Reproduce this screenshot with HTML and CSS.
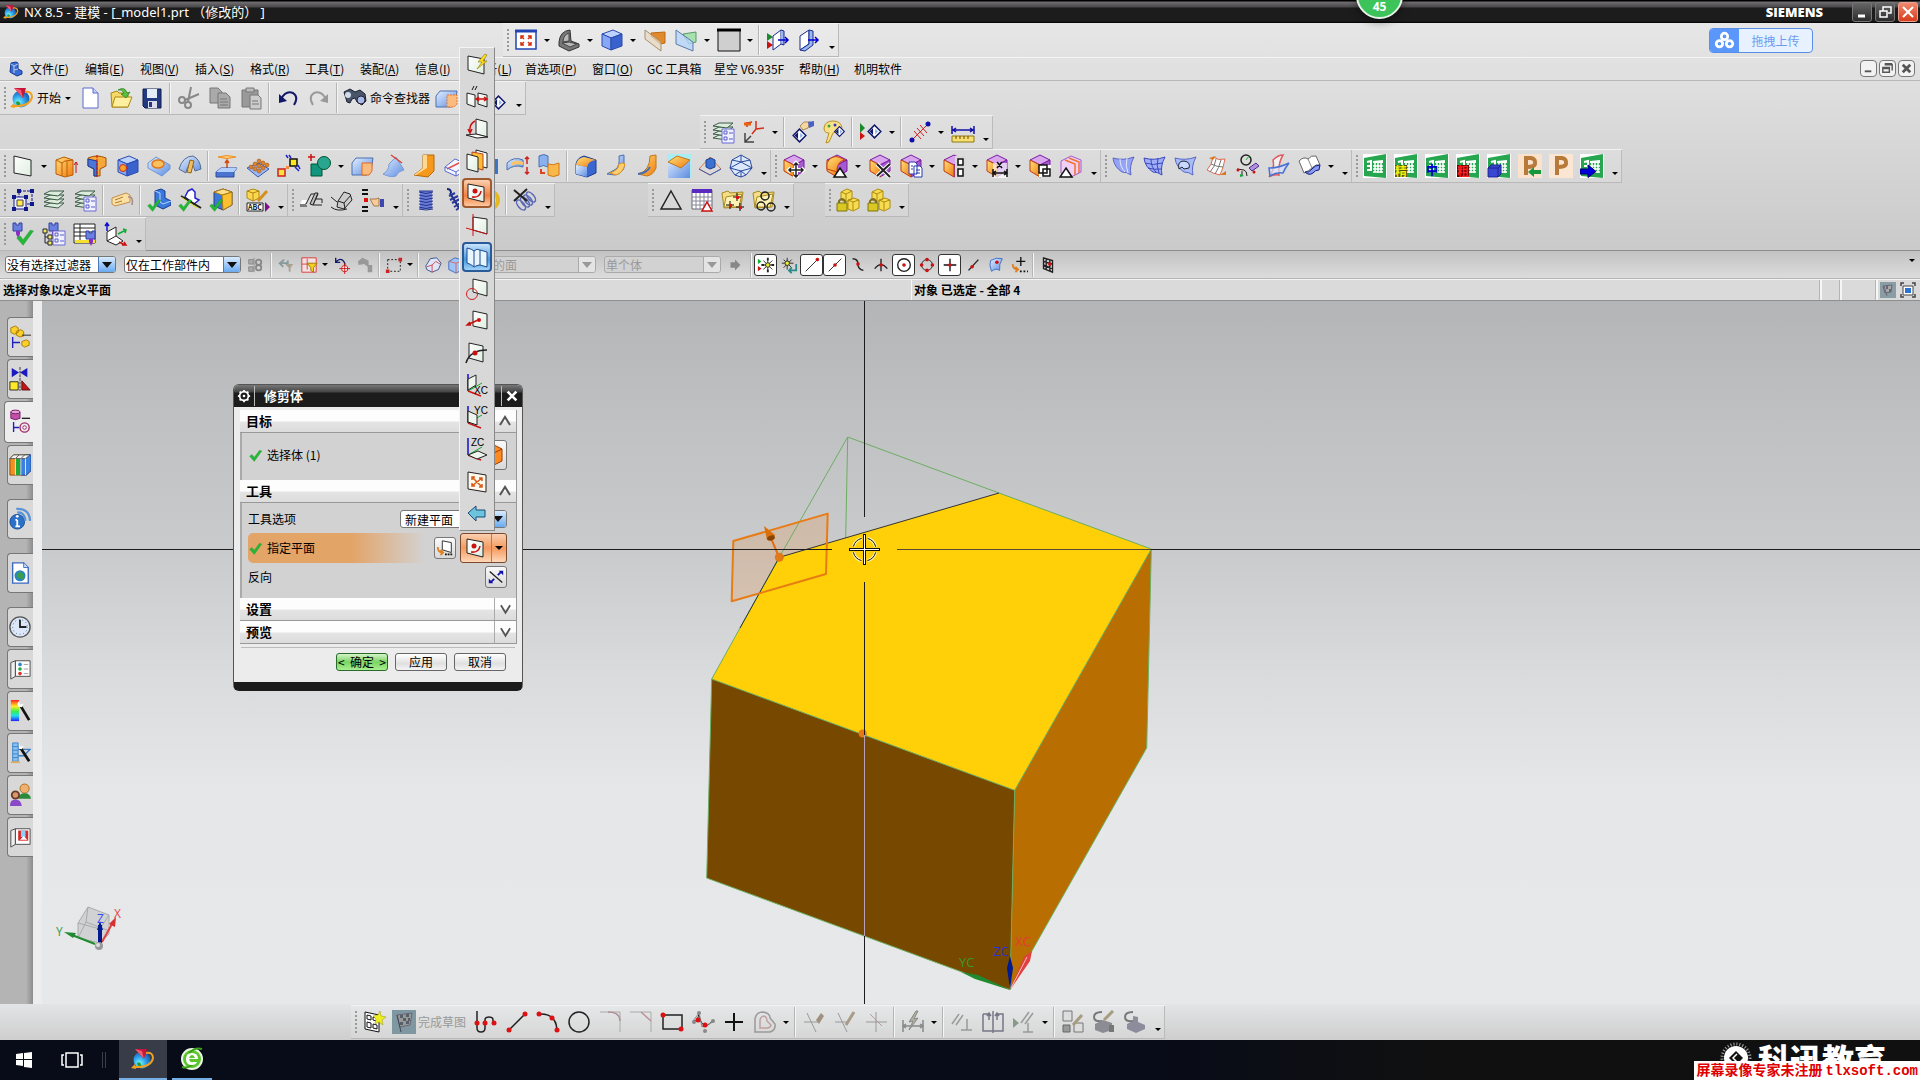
FILE: index.html
```html
<!DOCTYPE html>
<html lang="zh-CN">

<head>
    <meta charset="UTF-8">
    <meta name="viewport" content="width=device-width, initial-scale=1.0">
    <title>NX 8.5 - 建模</title>
    <link rel="stylesheet" href="styles.css">
</head>

<body>
    <!-- 公用图形 -->
    <svg class="defs" aria-hidden="true">
        <defs>
            <linearGradient id="gb" x1="0" y1="0" x2="1" y2="1"><stop offset="0" stop-color="#e4efff"/><stop offset="1" stop-color="#5c8de0"/></linearGradient>
            <linearGradient id="go" x1="0" y1="0" x2="1" y2="1"><stop offset="0" stop-color="#ffe27a"/><stop offset="1" stop-color="#f07a10"/></linearGradient>
            <linearGradient id="gs" x1="0" y1="0" x2="1" y2="1"><stop offset="0" stop-color="#fff"/><stop offset="1" stop-color="#dfeee0"/></linearGradient>
            <radialGradient id="gg" cx=".35" cy=".7" r=".8"><stop offset="0" stop-color="#7ff"/><stop offset=".5" stop-color="#2a9be8"/><stop offset="1" stop-color="#164a9c"/></radialGradient>
            <linearGradient id="rb" x1="0" y1="0" x2="0" y2="1"><stop offset="0" stop-color="#f22"/><stop offset=".3" stop-color="#fe2"/><stop offset=".55" stop-color="#3e5"/><stop offset=".75" stop-color="#2de"/><stop offset="1" stop-color="#22f"/></linearGradient>
        </defs>
        <symbol id="nx" viewBox="0 0 24 24"><circle cx="11" cy="13" r="8.500" fill="url(#gg)"/><path d="M6 16q3-2 4 1t-1 3q-3-1-3-4z" fill="#2c9a3c"/><path d="M2 20Q20 21 22 11Q22 5 15 6" fill="none" stroke="#f0a020" stroke-width="2"/><path d="M0 21l4-4 1 5z" fill="#f0a020"/><path d="M4 2l12 0-3 10z" fill="#c8143c"/><path d="M4 2l7 2 2 8z" fill="#f05a70"/></symbol>
        <symbol id="sheet" viewBox="0 0 24 24"><path d="M3 3l16 3v15L3 17z" fill="url(#gs)" stroke="#222"/></symbol>
        <symbol id="cube" viewBox="0 0 24 24"><path d="M12 1l10 5-10 5L2 6z" fill="#d9a6ee" stroke="#7a1aa0"/><path d="M12 11l10-5v11l-10 6z" fill="#a45ad0" stroke="#7a1aa0"/><path d="M2 6l10 5v12L2 17z" fill="url(#go)" stroke="#c33a10"/></symbol>
        <symbol id="box" viewBox="0 0 24 24"><path d="M13 2l9 4-11 4-9-4z" fill="#bcd2ff" stroke="#2a4ab0"/><path d="M2 6l9 4v12l-9-4z" fill="#86a8f4" stroke="#2a4ab0"/><path d="M11 10l11-4v12l-11 4z" fill="#3a62cc" stroke="#2a4ab0"/></symbol>
        <symbol id="dia" viewBox="0 0 24 24"><path d="M12 3l9 9-9 9-9-9z" fill="#fff" stroke="#10186a" stroke-width="2"/><path d="M10 7v10l-5-5z" fill="#10186a"/><path d="M13 8l4 4-4 4z" fill="#8ab4f0"/></symbol>
        <symbol id="lay" viewBox="0 0 24 24"><g fill="#dcebdc" stroke="#3a5a48"><path d="M2 18l6-3h14l-6 5z"/><path d="M2 14l6-3h14l-6 5z"/><path d="M2 10l6-3h14l-6 5z"/><path d="M2 6l6-3h14l-6 5z"/></g></symbol>
        <symbol id="list" viewBox="0 0 24 24"><path d="M11 9h12v14H11z" fill="#eef0ff" stroke="#6a6ad0"/><path d="M13 11h3v3h-3zM13 17h3v3h-3z" fill="none" stroke="#5a5ac8"/><path d="M18 13h4M18 19h4" stroke="#5a5ac8"/></symbol>
        <symbol id="tick" viewBox="0 0 24 24"><path d="M1 14l4-3 4 5L18 4l4 1L9 23z" fill="#25b838" stroke="#158a22" stroke-width=".5"/></symbol>
        <symbol id="nc" viewBox="0 0 24 24"><path d="M0 0h24v24H0z" fill="#fff"/><path d="M1 4l22-4v24L1 22z" fill="#27a650"/><path d="M4 8l4-1v9H4M4 12h3" fill="none" stroke="#fff" stroke-width="2"/><path d="M10 7l10-1v3H10z" fill="#fff"/><path d="M10 12h10M10 15h10M10 18h10M12 9v9M15 9v10M18 9v10" fill="none" stroke="#fff" stroke-width="1.500"/></symbol>
        <symbol id="fold" viewBox="0 0 24 24"><path d="M1 5l6-2 2 2 13-1-2 15-17 1z" fill="#f4dd84" stroke="#a88a20"/><path d="M5 9l16-3-3 13H3z" fill="#fdf2b4" stroke="#a88a20"/></symbol>
        <symbol id="lock" viewBox="0 0 24 24"><path d="M5 4l6-3 5 2v8l-6 3-5-2zM12 12l6-2 5 2v8l-6 3-5-2z" fill="#f6dc50" stroke="#b08c10"/><path d="M5 4l5 2 6-3M10 6v7M12 12l5 2 6-2M17 14v8" stroke="#b08c10" fill="none"/><path d="M3 15v-2q3-4 6 0v2" fill="none" stroke="#7a7020" stroke-width="2"/><path d="M1 15h10v8H1z" fill="#d8c820" stroke="#807410"/></symbol>
        <symbol id="ucs" viewBox="0 0 24 24"><path d="M3 1v17" stroke="#11c" stroke-width="1.500"/><path d="M3 18l14-8" stroke="#1a3"/><path d="M3 18l13 5" stroke="#c11" stroke-width="1.500"/></symbol>
        <symbol id="drv" viewBox="0 0 24 24"><path d="M2 1h3v2h3V1h3v8H2z" fill="#6a80e0" stroke="#3040a0"/><path d="M5 9h4v3l-2 4-2-4z" fill="#8a30c0"/></symbol>
        <symbol id="spr" viewBox="0 0 24 24"><path d="M6 3h12v18H6z" fill="#6a7cd8"/><path d="M5 4q7 3 14 0M5 7q7 3 14 0M5 10q7 3 14 0M5 13q7 3 14 0M5 16q7 3 14 0M5 19q7 3 14 0M5 21q7 2 14 0M5 3h14" fill="none" stroke="#24348c"/></symbol>
    </svg>

    <header class="titlebar">
        <svg class="logo" viewBox="0 0 24 24"><use href="#nx"/></svg>
        <h1>NX 8.5 - 建模 - [_model1.prt （修改的） ]</h1>
        <span class="brand">SIEMENS</span>
        <div class="winbtns">
            <button aria-label="最小化"><svg viewBox="0 0 18 18"><path d="M5 13h7" stroke="#fff" stroke-width="3"/></svg></button>
            <button aria-label="还原"><svg viewBox="0 0 18 18"><path d="M4 8h7v6H4zM7 8V4h8v6h-3" fill="none" stroke="#fff" stroke-width="1.500"/></svg></button>
            <button class="close" aria-label="关闭"><svg viewBox="0 0 18 18"><path d="M4 4l10 10M14 4L4 14" stroke="#fff" stroke-width="2"/></svg></button>
        </div>
    </header>
    <div class="timer">45</div>

    <div class="docks">
        <div class="row row-view">
            <div class="toolbar at-view">
                <button aria-label="适合窗口"><svg viewBox="0 0 24 24"><path d="M2 3h20v18H2z" fill="#fff" stroke="#2244b4" stroke-width="1.500"/><path d="M1 3h22" stroke="#2244b4" stroke-width="3"/><path d="M10 11L7 8m0 3V8h3M14 11l3-3m-3 0h3v3M10 14l-3 3m0-3v3h3M14 14l3 3m-3 0h3v-3" stroke="#d43010" stroke-width="1.500" fill="none"/></svg></button><button class="dd" aria-label="展开"></button>
                <button aria-label="着色方向"><svg viewBox="0 0 24 24"><path d="M2 14Q3 3 13 2l1 11 8 3v3l-10 4-10-5z" fill="#777" stroke="#333"/><path d="M6 14q0-7 6-9v8zM12 14l8 2-7 3-8-4z" fill="#b8b8b8" stroke="#444"/></svg></button><button class="dd" aria-label="展开"></button>
                <button aria-label="带边着色"><svg viewBox="0 0 24 24"><use href="#box"/></svg></button><button class="dd" aria-label="展开"></button>
                <button aria-label="编辑截面"><svg viewBox="0 0 24 24"><path d="M8 5l14-1v11l-5 1-9-8z" fill="#e08a30" stroke="#c06a10"/><path d="M2 2l16 12v9L2 11z" fill="#e8d8c0" fill-opacity=".7" stroke="#a89070"/></svg></button>
                <button aria-label="剪切截面"><svg viewBox="0 0 24 24"><path d="M9 6l13-2v10l-7 2z" fill="#a8e0b0" stroke="#5a9a68"/><path d="M2 2l17 12v9L2 16z" fill="#b4d4fa" fill-opacity=".8" stroke="#5a7aa8"/></svg></button><button class="dd" aria-label="展开"></button>
                <button aria-label="背景"><svg viewBox="0 0 24 24"><path d="M1 2h22v21H1z" fill="#cfcfcf" stroke="#111"/><path d="M0 2h24" stroke="#000" stroke-width="3"/></svg></button><button class="dd" aria-label="展开"></button>
                <i class="sep"></i>
                <button aria-label="显示"><svg viewBox="0 0 24 24"><path d="M1 5l6 4-6 4z" fill="#1a8a2a"/><path d="M1 13l6 4-6 4z" fill="#c11"/><path d="M7 8l8-6v14l-8 6z" fill="#fff" stroke="#1a2a90"/><path d="M15 2l3 1v14l-3-1" fill="#9ab8f0" stroke="#1a2a90"/><path d="M12 12h10M19 9l3 3-3 3" stroke="#00c" stroke-width="1.500" fill="none"/></svg></button>
                <button aria-label="隐藏"><svg viewBox="0 0 24 24"><path d="M3 8l9-6v14l-9 6z" fill="#fff" stroke="#1a2a90"/><path d="M12 2l4 1v14l-8 6-5-1 9-6z" fill="#9ab8f0" stroke="#1a2a90"/><path d="M11 12h10M18 9l3 3-3 3" stroke="#00c" stroke-width="1.500" fill="none"/></svg></button>
                <button class="opt" aria-label="工具条选项"></button>
            </div>
            <button class="upload"><svg viewBox="0 0 24 24"><g fill="none" stroke="#fff" stroke-width="3"><circle cx="12" cy="7" r="3.500"/><circle cx="6.500" cy="15" r="3.500"/><circle cx="17.500" cy="15" r="3.500"/></g></svg><span>拖拽上传</span></button>
        </div>

        <nav class="row menubar">
            <svg viewBox="0 0 16 16"><path d="M3 2l5-1 2 1v6l4 2v3l-5 2-7-4z" fill="#3a6cd8" stroke="#143a90"/><path d="M3 3l3 2v7M6 5l4-2M6 9l4-1" stroke="#bcd" fill="none"/></svg>
            <ul>
                <li>文件(<u>F</u>)</li>
                <li>编辑(<u>E</u>)</li>
                <li>视图(<u>V</u>)</li>
                <li>插入(<u>S</u>)</li>
                <li>格式(<u>R</u>)</li>
                <li>工具(<u>T</u>)</li>
                <li>装配(<u>A</u>)</li>
                <li>信息(<u>I</u>)</li>
                <li class="right">分析(<u>L</u>)</li>
                <li class="m4">首选项(<u>P</u>)</li>
                <li>窗口(<u>O</u>)</li>
                <li class="m4">GC 工具箱</li>
                <li class="m6">星空 V6.935F</li>
                <li>帮助(<u>H</u>)</li>
                <li>机明软件</li>
            </ul>
            <div class="mdi">
                <button aria-label="最小化"><svg viewBox="0 0 16 16"><path d="M4 11h7" stroke="#555" stroke-width="2"/></svg></button>
                <button aria-label="还原"><svg viewBox="0 0 16 16"><path d="M3 7h7v5H3zM5 4h8v6M3 8h7M5 3h8" fill="none" stroke="#555" stroke-width="1.500"/></svg></button>
                <button aria-label="关闭"><svg viewBox="0 0 16 16"><path d="M4 4l8 8M12 4l-8 8" stroke="#555" stroke-width="3"/></svg></button>
            </div>
        </nav>

        <div class="row">
            <div class="toolbar">
                <button class="wide"><svg viewBox="0 0 24 24"><use href="#nx"/></svg>开始</button><button class="dd" aria-label="展开"></button>
                <button aria-label="新建"><svg viewBox="0 0 24 24"><path d="M5 2h10l5 5v15H5z" fill="#fff" stroke="#5a6ad0"/><path d="M15 2v5h5" fill="#c8d0ff" stroke="#5a6ad0"/></svg></button>
                <button aria-label="打开"><svg viewBox="0 0 24 24"><path d="M2 7l6-2 2 2h9v14H3z" fill="#f4d868" stroke="#a88a10"/><path d="M6 11h17l-4 10H3z" fill="#fff0a0" stroke="#a88a10"/><path d="M9 4q7-4 9 3l3-1-4 6-5-4 3-1q-2-4-6-3z" fill="#5ac040" stroke="#2a7a20" stroke-width=".7"/></svg></button>
                <button aria-label="保存"><svg viewBox="0 0 24 24"><path d="M3 3h18v19H5l-2-2z" fill="#223a80" stroke="#101c50"/><path d="M7 3h10v9H7z" fill="#e4ecf8"/><path d="M8 15h9v7H8z" fill="#dde"/><path d="M9 16h3v5H9z" fill="#223a80"/></svg></button>
                <i class="sep"></i>
                <button aria-label="剪切"><svg viewBox="0 0 24 24" fill="none" stroke="#888" stroke-width="2"><path d="M14 1l-3 15M22 8L8 14"/><circle cx="5" cy="14" r="3"/><circle cx="11" cy="19" r="3"/></svg></button>
                <button aria-label="复制"><svg viewBox="0 0 24 24" fill="#aaa" stroke="#777"><path d="M2 2h8l4 4v11H2z"/><path d="M10 7h8l4 4v11H10zM12 13h7M12 16h8M12 19h8"/></svg></button>
                <button aria-label="粘贴"><svg viewBox="0 0 24 24" fill="#999" stroke="#777"><path d="M3 4h16v17H3z"/><path d="M7 2h8v4H7z" fill="#bbb"/><path d="M11 9h8l3 3v11H11zM13 15h6M13 18h7" fill="#ccc"/></svg></button>
                <i class="sep"></i>
                <button aria-label="撤消"><svg viewBox="0 0 24 24"><path d="M5 13Q10 4 17 7q6 4 1 12" fill="none" stroke="#10186a" stroke-width="2"/><path d="M3 8v9l8-2z" fill="#10186a"/></svg></button>
                <button aria-label="重做"><svg viewBox="0 0 24 24"><path d="M19 13Q14 4 7 7q-6 4-1 12" fill="none" stroke="#999" stroke-width="2"/><path d="M21 8v9l-8-2z" fill="#999"/></svg></button>
                <i class="sep"></i>
                <button class="wide"><svg viewBox="0 0 24 24"><path d="M1 6l6-3 5 3 5-2 5 4 1 7-4 4-5-3-2-4-3 1-2 4-3-1z" fill="#4a5468" stroke="#1a2030"/><circle cx="5" cy="9" r="3" fill="#d0dcec"/><circle cx="18" cy="14" r="4" fill="#a8b8e8" stroke="#223"/></svg>命令查找器</button>
                <button aria-label="拉伸"><svg viewBox="0 0 24 24"><path d="M1 10l4-5h17l-2 13-4 3H1z" fill="url(#gb)" stroke="#4a70b0"/><path d="M12 9h10v9l-3 3h-7z" fill="#f8bc80" stroke="#f07020" stroke-dasharray="2 1"/></svg></button><button class="dd" aria-label="展开"></button>
                <i class="sep"></i>
                <button aria-label="信息"><svg viewBox="0 0 24 24"><path d="M1 1h9v12H1z" fill="#fff" stroke="#10186a" stroke-width="2"/><path d="M5 4v6" stroke="#10186a" stroke-width="2"/><use href="#dia" x="6" y="8" width="17" height="17"/></svg></button>
                <button class="opt" aria-label="工具条选项"></button>
            </div>
        </div>

        <div class="row">
            <div class="toolbar at-utility">
                <button aria-label="图层设置"><svg viewBox="0 0 24 24"><use href="#lay"/><use href="#list"/></svg></button>
                <button aria-label="坐标系"><svg viewBox="0 0 24 24"><path d="M2 4l8-2M5 2v5M14 9V1m0 8l8-1M14 9l-4 5" stroke="#d43018" stroke-width="1.500" fill="none"/><path d="M2 4h7" stroke="#e86010" stroke-width="3"/><path d="M3 13v9h9M3 22l6-6" stroke="#444" stroke-width="1.500" fill="none"/></svg></button><button class="dd" aria-label="展开"></button>
                <i class="sep"></i>
                <button aria-label="编辑对象显示"><svg viewBox="0 0 24 24"><use href="#dia" x="0" y="7" width="17" height="17"/><path d="M9 6l4-4h6l-2 6-5 2z" fill="#f4d8a0" stroke="#a88850"/><path d="M17 2l6-1v5l-5 2z" fill="#4a60c8"/></svg></button>
                <button aria-label="对象颜色"><svg viewBox="0 0 24 24"><path d="M2 8q1-7 9-7 8 0 9 7 0 3-4 3l-5 2-4 9-3 1 3-10q-5 0-5-5z" fill="#fbe08a" stroke="#b89020"/><circle cx="7" cy="6" r="1.500" fill="#3a3"/><circle cx="13" cy="5" r="1.500" fill="#33c"/><use href="#dia" x="11" y="5" width="13" height="13"/></svg></button>
                <i class="sep"></i>
                <button aria-label="显示和隐藏"><svg viewBox="0 0 24 24"><path d="M1 3l5 5-5 5z" fill="#1a8a2a"/><path d="M1 12l5 4-5 4z" fill="#c11"/><use href="#dia" x="7" y="3" width="17" height="17"/></svg></button><button class="dd" aria-label="展开"></button>
                <i class="sep"></i>
                <button aria-label="测量距离"><svg viewBox="0 0 24 24"><path d="M4 20L20 4" stroke="#c22"/><path d="M6 11l7 8M9 8l7 8M12 5l7 8" stroke="#c22"/><circle cx="4" cy="20" r="2.500" fill="#11a"/><circle cx="20" cy="4" r="2.500" fill="#11a"/></svg></button><button class="dd" aria-label="展开"></button>
                <button aria-label="标尺"><svg viewBox="0 0 24 24"><path d="M1 6v8M23 6v8M2 10h20M5 8l-3 2 3 2M19 8l3 2-3 2" stroke="#11a" stroke-width="1.500" fill="none"/><path d="M1 16h22v6H1z" fill="#f8e070" stroke="#907a10"/><path d="M5 16v3M9 16v3M13 16v3M17 16v3" stroke="#640"/></svg></button>
                <button class="opt" aria-label="工具条选项"></button>
            </div>
        </div>

        <div class="row">
            <div class="toolbar">
                <button aria-label="基准平面"><svg viewBox="0 0 24 24"><path d="M3 2l17 4v16L3 19z" fill="url(#gs)" stroke="#222"/></svg></button><button class="dd" aria-label="展开"></button>
                <button aria-label="拉伸"><svg viewBox="0 0 24 24"><path d="M2 6l8-3 9 3v15l-8 2-9-3z" fill="url(#go)" stroke="#c05a08"/><path d="M2 6l6 3 3-2 8-1M8 9v13M13 7v15" stroke="#c05a08" fill="none"/><path d="M22 19V8m-2 3l2-3 2 3" stroke="#c11" fill="none"/></svg></button>
                <button aria-label="回转"><svg viewBox="0 0 24 24"><path d="M3 4q9-4 18 0v8l-6 3v7H9v-7l-6-3z" fill="#f8a838" stroke="#a05000"/><path d="M3 5l9 2v15H9v-7l-6-3z" fill="#4a76dc" stroke="#1a3a90"/><path d="M12 1v22" stroke="#c11" stroke-dasharray="3 1"/></svg></button>
                <button aria-label="孔"><svg viewBox="0 0 24 24"><use href="#box"/><circle cx="7" cy="14" r="3.500" fill="#f8a030" stroke="#d02a10"/></svg></button>
                <button aria-label="凸台"><svg viewBox="0 0 24 24"><path d="M1 9l8-6 14 8v4l-8 7-14-8z" fill="url(#gb)" stroke="#6a94d8"/><ellipse cx="11" cy="10" rx="6" ry="4" fill="#f9c060" stroke="#e07818" stroke-width="1.500"/></svg></button>
                <button aria-label="筋板"><svg viewBox="0 0 24 24"><path d="M1 15Q5 2 15 2q7 3 8 13l-6 2q-1-6-4-7-4 2-5 9z" fill="url(#gb)" stroke="#556b94"/><path d="M12 6l4 1-3 12-4-1z" fill="#f0c060" stroke="#906020"/></svg></button>
                <i class="sep"></i>
                <button aria-label="抽取体"><svg viewBox="0 0 24 24"><path d="M3 3q9-3 18 0-9 3-18 0z" fill="#fbd080" stroke="#f09020"/><path d="M12 14V6m-2 3l2-3 2 3" stroke="#d84a10" stroke-width="1.500" fill="none"/><path d="M1 18l5-4h16l-3 4v5H1z" fill="#4a74d0" stroke="#2a4a9c"/><path d="M1 18l5-4h16l-3 4z" fill="#b4d0ff"/></svg></button>
                <button aria-label="阵列特征"><svg viewBox="0 0 24 24"><path d="M1 14l12-5 10 6-11 8z" fill="#9ab8f4" stroke="#3a5ab0"/><g fill="#e08428" stroke="#9a4a0c" stroke-width=".5"><circle cx="5" cy="13" r="2"/><circle cx="9" cy="15" r="2"/><circle cx="13" cy="17" r="2"/><circle cx="9" cy="10" r="2"/><circle cx="13" cy="12" r="2"/><circle cx="17" cy="14" r="2"/><circle cx="13" cy="7" r="2"/><circle cx="17" cy="9" r="2"/><circle cx="21" cy="11" r="2"/></g></svg></button>
                <button aria-label="镜像特征"><svg viewBox="0 0 24 24"><path d="M1 15h7v7H1z" fill="#ffe040" stroke="#c22" stroke-width="1.500"/><path d="M13 5h7v7h-7z" fill="#ffe81a" stroke="#111" stroke-width="1.500"/><path d="M9 12h3v3H9z" fill="#f83"/><path d="M9 1l2 3M12 1l2 3M21 11l2 4M18 13l4 4" stroke="#22c" stroke-width="1.500"/></svg></button>
                <button aria-label="求和"><svg viewBox="0 0 24 24"><path d="M3 10h11v12H3z" fill="#12957f" stroke="#053"/><circle cx="16" cy="9" r="6.500" fill="#2aa590" stroke="#053"/><path d="M0 3h7M3 0v7" stroke="#c11" stroke-width="1.500"/></svg></button><button class="dd" aria-label="展开"></button>
                <button aria-label="修剪体"><svg viewBox="0 0 24 24"><path d="M1 9l4-5h17l-2 13-4 4H1z" fill="url(#gb)" stroke="#4a70b0"/><path d="M11 9h10v8l-3 4h-7z" fill="#f8bc80" stroke="#e06a20"/></svg></button>
                <button aria-label="拆分体"><svg viewBox="0 0 24 24"><path d="M1 20q6-3 6-10L14 3l8 13q-6 1-8 6-5 2-13-2z" fill="url(#gb)" stroke="#7a9ad8"/><path d="M9 1l11 8" stroke="#d43" stroke-width="1.500"/></svg></button>
                <button aria-label="倒圆"><svg viewBox="0 0 24 24"><path d="M10 1h11v16l-6 6L1 21l9-7z" fill="#f5981c" stroke="#b86a08"/><path d="M10 1h4v13L3 21l-2 0 9-7z" fill="#ffd890"/></svg></button>
                <button aria-label="草图"><svg viewBox="0 0 24 24"><path d="M1 13l10-8 12 5v6l-11 6-11-5z" fill="#f4f6ff" stroke="#5a6ad0"/><path d="M3 15l14-7" stroke="#e05050" stroke-width="1.500"/><path d="M1 13l11 5 11-8M12 18v4" stroke="#5a6ad0" fill="none"/></svg></button>
                <button aria-label="缝合"><svg viewBox="0 0 24 24"><path d="M2 5h21v15H2z" fill="#3a74c8"/></svg></button>
                <button aria-label="偏置曲面"><svg viewBox="0 0 24 24"><path d="M1 9q7-7 16-3v7q-9-3-16 3z" fill="url(#gb)" stroke="#4a70b0"/><path d="M5 9q5-4 12-1v3q-7-2-12 1z" fill="#fbc468"/><path d="M21 3v7m-2-5l2-2 2 2M21 20v-7m-2 5l2 2 2-2" stroke="#c22" stroke-width="1.500" fill="none"/></svg></button>
                <button aria-label="替换面"><svg viewBox="0 0 24 24"><path d="M2 2q5-3 9 0v11q-5-3-9 0z" fill="#8ab0f0" stroke="#4a70b0"/><path d="M11 10q5 2 11-1v12q-6 3-11 0z" fill="#fbb84a" stroke="#d07818"/><path d="M4 15v4h4" stroke="#d42" stroke-width="2" fill="none"/></svg></button>
                <i class="sep"></i>
                <button aria-label="边倒圆"><svg viewBox="0 0 24 24"><path d="M2 10v10l11 3 9-4V6L10 2Q3 4 2 10z" fill="#3a66d0" stroke="#1e3c90"/><path d="M2 11q1-7 8-8l12 3q-8 1-9 7z" fill="url(#go)"/><path d="M2 11l11 2v10L2 20z" fill="url(#gb)"/></svg></button>
                <button aria-label="面倒圆"><svg viewBox="0 0 24 24"><path d="M14 2l5-1v13q-3 6-9 7l-8-1 9-5q4-3 3-13z" fill="url(#gb)" stroke="#4a70b0"/><path d="M14 10q4-2 6 0-2 9-9 11l-6-2q9-3 9-9z" fill="#fcd070" stroke="#e09020"/></svg></button>
                <button aria-label="软倒圆"><svg viewBox="0 0 24 24"><path d="M14 2l6-1v13q-3 7-9 8l-9-2q12-3 12-18z" fill="url(#go)" stroke="#c07818"/><path d="M2 20q9-1 12-7" stroke="#4a70b0" stroke-width="2" fill="none"/></svg></button>
                <button aria-label="倒斜角"><svg viewBox="0 0 24 24"><path d="M0 0h24v24H0z" fill="#a8ecf4"/><path d="M1 9l9-7 13 4v18H1z" fill="url(#gb)"/><path d="M1 8l9-6 13 4-9 8z" fill="url(#go)" stroke="#c07818"/></svg></button>
                <button aria-label="拔模"><svg viewBox="0 0 24 24"><path d="M1 15L12 3l11 12-11 6z" fill="none" stroke="#d07a50"/><path d="M8 6l5-2 4 2v7l-5 2-4-2z" fill="#3a72d0" stroke="#1e3c90"/><path d="M1 15l11 6 11-6" stroke="#3a5ab0" fill="none"/></svg></button>
                <button aria-label="抽壳"><svg viewBox="0 0 24 24" fill="#dce8fc" stroke="#2a4a9c"><path d="M12 1l9 5 2 8-6 7-5 2-6-2-5-7 2-8z"/><path d="M3 6l9 2 9-2M1 14l11-6 11 6-11 3zM12 1v7M12 17v6M6 21l6-4 5 4" fill="none"/></svg></button>
                <button class="opt" aria-label="工具条选项"></button>
            </div>
            <div class="toolbar">
                <button aria-label="移动面"><svg viewBox="0 0 24 24"><use href="#cube"/><path d="M14 9v14M7 16h14M12 11l2-2 2 2M12 21l2 2 2-2M9 14l-2 2 2 2M19 14l2 2-2 2" stroke="#fff" stroke-width="4" fill="none"/><path d="M14 9v14M7 16h14M12 11l2-2 2 2M12 21l2 2 2-2M9 14l-2 2 2 2M19 14l2 2-2 2" stroke="#222" stroke-width="1.500" fill="none"/></svg></button><button class="dd" aria-label="展开"></button>
                <button aria-label="拉出面"><svg viewBox="0 0 24 24"><use href="#cube"/><path d="M2 9q4-8 12-6l6 3q-7 1-8 9v3l-10-3z" fill="url(#go)" stroke="#c33a10"/><path d="M15 14l6 9H9z" fill="#fff" stroke="#111" stroke-width="1.500"/></svg></button><button class="dd" aria-label="展开"></button>
                <button aria-label="删除面"><svg viewBox="0 0 24 24"><use href="#cube"/><path d="M9 10l13 13M22 10L9 22" stroke="#fff" stroke-width="4"/><path d="M9 10l13 13M22 10L9 22" stroke="#222" stroke-width="2"/></svg></button>
                <button aria-label="复制面"><svg viewBox="0 0 24 24"><use href="#cube"/><path d="M10 8h6l2 2v10h-8zM15 12h6l2 2v9h-8z" fill="#fff" stroke="#2a3ab0"/><path d="M17 16h4M17 19h4M12 12h2M12 15h2" stroke="#2a3ab0"/></svg></button><button class="dd" aria-label="展开"></button>
                <button aria-label="阵列面"><svg viewBox="0 0 24 24"><use href="#cube"/><path d="M13 2h11v21H13z" fill="#d8d8d8"/><path d="M16 5h5v6h-5zM16 15h5v7h-5z" fill="#fff" stroke="#111" stroke-width="1.500"/></svg></button><button class="dd" aria-label="展开"></button>
                <button aria-label="尺寸"><svg viewBox="0 0 24 24"><use href="#cube"/><path d="M8 9h14v15H8z" fill="#fff" fill-opacity=".7"/><path d="M12 8l5 6M17 8l-5 6M8 15v8M22 15v8M8 19h14M11 17l-3 2 3 2M19 17l3 2-3 2" stroke="#111" stroke-width="1.500" fill="none"/></svg></button><button class="dd" aria-label="展开"></button>
                <button aria-label="组合面"><svg viewBox="0 0 24 24"><use href="#cube"/><path d="M11 11h12v12H11z" fill="#fff"/><path d="M11 11h8v8h-8zM15 15h7v7h-7z" fill="none" stroke="#111" stroke-width="1.500"/></svg></button>
                <button aria-label="优化面"><svg viewBox="0 0 24 24"><path d="M2 7l10-5 10 4v12l-10 5-10-4z" fill="#f0d0f4" stroke="#a85ac8"/><path d="M6 6l10 4v11M10 4l10 4v11" stroke="#f07030" stroke-width="1.500" fill="none"/><path d="M7 14l6 9H1z" fill="#fff" stroke="#111" stroke-width="1.500"/></svg></button>
                <button class="opt" aria-label="工具条选项"></button>
            </div>
            <div class="toolbar">
                <button aria-label="直纹"><svg viewBox="0 0 24 24"><path d="M1 4q10 3 21-1-5 9-3 18-4-3-9-3Q2 13 1 4z" fill="#96a4f4" stroke="#5a66c8"/><path d="M8 5q0 8 5 13M15 4q-2 8 1 15" stroke="#e4e8ff" fill="none"/></svg></button>
                <button aria-label="曲线网格"><svg viewBox="0 0 24 24"><path d="M1 4q10 3 21-1-5 9-3 18-4-3-9-3Q2 13 1 4z" fill="#a0aef8" stroke="#3a48c0"/><path d="M8 5q0 8 5 13M15 4q-2 8 1 15M2 9q8 3 17 0M5 14q6 2 13 1" stroke="#3a48c0" fill="none"/></svg></button>
                <button aria-label="N边曲面"><svg viewBox="0 0 24 24"><path d="M1 4q10 3 21-1-5 9-3 18-4-3-9-3Q2 13 1 4z" fill="#a8bcfa" stroke="#5a66c8"/><path d="M5 15q-2-8 5-8 7 1 5 7l-5 1-2-2z" fill="#c8d8ff" stroke="#223"/></svg></button>
                <button aria-label="扫掠"><svg viewBox="0 0 24 24"><path d="M8 3q6 4 12 2-2 10-5 16-6-1-13-5 5-5 6-13z" fill="#fff" stroke="#e06a50"/><path d="M11 5q-1 8-6 13M16 6q-2 8-6 14M6 10q6 3 12 3" stroke="#777" fill="none"/><path d="M4 4l7-2-3 4zM15 21l6-4v4z" fill="#d87818"/></svg></button>
                <button aria-label="剖切曲面"><svg viewBox="0 0 24 24"><circle cx="10" cy="6" r="5" fill="none" stroke="#222" stroke-width="1.500"/><path d="M10 6l3-4" stroke="#2a3"/><path d="M13 14l7-5 3 3-7 5z" fill="#b490e0" stroke="#4a2a90"/><path d="M1 15l7 1q3 1 3 6M6 22v-5" stroke="#222" fill="none"/><circle cx="2" cy="16" r="1.500" fill="#c11"/><circle cx="18" cy="18" r="1.500" fill="#c11"/><path d="M4 20l4 2-4 1z" fill="#1a3"/></svg></button>
                <button aria-label="桥接"><svg viewBox="0 0 24 24"><path d="M6 6q5-5 10-5-5 8-4 20-6-1-10 2 6-7 4-17z" fill="#fff" fill-opacity=".6" stroke="#e05a60" stroke-width="1.500"/><path d="M2 14q10 0 20-5-4 5-6 10-7-1-13 3z" fill="#d4e0ff" fill-opacity=".7" stroke="#4a70d0" stroke-width="1.500"/></svg></button>
                <button aria-label="修剪片体"><svg viewBox="0 0 24 24"><path d="M1 7q5-5 9-2 3-4 8-3l4 9q-4-1-7 2-4 4-9 6z" fill="#fff" stroke="#666"/><path d="M10 5l4 9" stroke="#888"/><path d="M7 18q4 1 7-3t8-4l-1 5q-4 0-6 3-4 3-8-1z" fill="#8a9cf0" stroke="#11188a"/></svg></button><button class="dd" aria-label="展开"></button>
                <button class="opt" aria-label="工具条选项"></button>
            </div>
            <div class="toolbar">
                <button aria-label="加工"><svg viewBox="0 0 24 24"><use href="#nc"/></svg></button>
                <button aria-label="精加工"><svg viewBox="0 0 24 24"><use href="#nc"/><path d="M1 11h12v12H1z" fill="#50500a"/><text x="1" y="22" font-size="12" font-weight="700" fill="#ee1">精</text></svg></button>
                <button aria-label="中加工"><svg viewBox="0 0 24 24"><use href="#nc"/><text x="1" y="21" font-size="12" font-weight="900" fill="#00c">中</text></svg></button>
                <button aria-label="粗加工"><svg viewBox="0 0 24 24"><use href="#nc"/><path d="M1 11h12v12H1z" fill="#500"/><text x="1" y="22" font-size="12" font-weight="700" fill="#f22">粗</text></svg></button>
                <button aria-label="毛坯"><svg viewBox="0 0 24 24"><use href="#nc"/><path d="M1 14l3-3h10v9l-3 3H1z" fill="#3a48d0" stroke="#1a2090"/><path d="M1 14h10v9M11 14l3-3" stroke="#1a2090" fill="none"/></svg></button>
                <button aria-label="导入 PowerMill"><svg viewBox="0 0 24 24"><path d="M0 0h24v24H0z" fill="#fbe2cc"/><path d="M8 21V4h5q5 1 4 6-1 3-8 3" fill="none" stroke="#b87a3a" stroke-width="4"/><path d="M10 18l6-5v3h7v4h-7v3z" fill="#18983a"/></svg></button>
                <button aria-label="PowerMill"><svg viewBox="0 0 24 24"><path d="M0 0h24v24H0z" fill="#fbe6d4"/><path d="M8 21V4h5q5 1 4 6-1 3-8 3" fill="none" stroke="#b87a3a" stroke-width="4"/></svg></button>
                <button aria-label="导出"><svg viewBox="0 0 24 24"><use href="#nc"/><path d="M0 15h8v-4l8 6.500-8 6V20H0z" fill="#00d" stroke="#006"/></svg></button>
                <button class="opt" aria-label="工具条选项"></button>
            </div>
        </div>

        <div class="row">
            <div class="toolbar">
                <button aria-label="装配"><svg viewBox="0 0 24 24"><path d="M8 3h13v13H8z" fill="none" stroke="#11188a" stroke-dasharray="3 1"/><path d="M3 9h12v12H3z" fill="#eef" stroke="#11188a"/><path d="M6 12h6v6H6z" fill="#ffe850" stroke="#444"/><path d="M1 7h4v4H1zM13 7h4v4h-4zM1 19h4v4H1zM13 19h4v4h-4zM6 1h4v4H6zM19 1h4v4h-4zM19 14h4v4h-4z" fill="#11188a"/></svg></button>
                <button aria-label="图层"><svg viewBox="0 0 24 24"><use href="#lay"/></svg></button>
                <button aria-label="图层类别"><svg viewBox="0 0 24 24"><use href="#lay"/><use href="#list"/></svg></button>
                <i class="sep"></i>
                <button aria-label="属性"><svg viewBox="0 0 24 24"><path d="M2 10l14-5 4 2 0 7-15 4-3-2z" fill="#fbe0a4" stroke="#c0904a"/><path d="M5 12l8-3M5 15l7-2" stroke="#b07830"/><path d="M18 9q6-1 4 8" stroke="#a88" fill="none" stroke-width="1.500"/></svg></button>
                <i class="sep"></i>
                <button aria-label="检查几何体"><svg viewBox="0 0 24 24"><path d="M8 3l6-2 4 2v7l6 3v4l-8 4-8-4z" fill="#3a78dc" stroke="#143a90"/><path d="M8 3l5 2v9l3 2 8-3" fill="none" stroke="#b4d0ff"/><use href="#tick" y="9" width="15" height="15"/></svg></button>
                <button aria-label="检查草图"><svg viewBox="0 0 24 24"><path d="M10 3l4-2 3 3v6l4 2-5 4-9-7z" fill="#fff" stroke="#22c" stroke-width="1.500"/><path d="M3 8l20 12" stroke="#221" stroke-width="2"/><path d="M3 9l16 11" stroke="#dd2"/><use href="#tick" y="9" width="15" height="15"/></svg></button>
                <button aria-label="检查体"><svg viewBox="0 0 24 24"><path d="M5 4l9-3 9 3v13l-9 5-9-4z" fill="#3a78dc" stroke="#2a3a80"/><path d="M13 7l10-3v13l-9 5z" fill="#fbc030" stroke="#b07808"/><path d="M5 4l8 3 10-3-9-3z" fill="#fbe08a" stroke="#b07808"/><use href="#tick" y="9" width="15" height="15"/></svg></button>
                <i class="sep"></i>
                <button aria-label="注释"><svg viewBox="0 0 24 24"><path d="M1 3l6-2 6 2v7l-6 3-6-3z" fill="#fbd850" stroke="#b08810"/><path d="M1 3l6 2 6-2M7 5v8" stroke="#b08810" fill="none"/><path d="M21 3l-9 10" stroke="#d8901c" stroke-width="3"/><path d="M1 15h16v8H1z" fill="#fff" stroke="#222"/><text x="2" y="22" font-size="7" font-weight="700" fill="#111">ABC</text><path d="M19 14l5 5-5 5z" fill="#80108a"/></svg></button>
                <button class="opt" aria-label="工具条选项"></button>
            </div>
            <div class="toolbar">
                <button aria-label="更新"><svg viewBox="0 0 24 24"><path d="M1 16h6l5-10h7l-5 11h9M1 18h7M14 11h9v4" fill="none" stroke="#222"/><path d="M11 16l5-11h3l-5 12z" fill="#bbb" stroke="#222"/><path d="M3 12h5l-2 4H1z" fill="#fff"/></svg></button>
                <button aria-label="同步"><svg viewBox="0 0 24 24"><path d="M8 13l6-9 6 2 2 6-8 9-7-2z" fill="#ccc" stroke="#222"/><path d="M8 13l6 2 7-8M14 15l1 6" stroke="#222" fill="none"/><path d="M1 9l6 5M1 19q6 5 16 2" stroke="#222" fill="none"/></svg></button>
                <button aria-label="回放"><svg viewBox="0 0 24 24"><path d="M1 2h6M1 6h6M1 19h6M1 23h6" stroke="#111" stroke-width="2"/><path d="M3 10h4v4H3z" fill="#d11"/><path d="M9 11h6l3-1v8h-5z" fill="#f8cc98" stroke="#a87848"/><path d="M19 11h4v8h-4z" fill="#3a48b0"/></svg></button>
                <button class="opt" aria-label="工具条选项"></button>
            </div>
            <div class="toolbar">
                <button aria-label="弹簧"><svg viewBox="0 0 24 24"><use href="#spr"/></svg></button>
                <button aria-label="拉伸弹簧"><svg viewBox="0 0 24 24"><path d="M2 1q4 0 4 4M5 5l9 15" stroke="#1a2a80" fill="none" stroke-width="2"/><path d="M4 8l6-3M5 12l8-4M7 15l8-4M9 19l8-5M11 22l8-5" stroke="#2a3a98" stroke-width="2"/></svg></button>
                <button aria-label="轴承"><svg viewBox="0 0 24 24"><circle cx="13" cy="12" r="9" fill="none" stroke="#e8b820" stroke-width="4"/></svg></button>
                <i class="sep"></i>
                <button aria-label="删除弹簧"><svg viewBox="0 0 24 24" fill="none"><g stroke="#5a68b8" stroke-width="1.500"><ellipse cx="8" cy="17" rx="3" ry="6" transform="rotate(-40 8 17)"/><ellipse cx="12" cy="14" rx="3" ry="6" transform="rotate(-40 12 14)"/><ellipse cx="15" cy="12" rx="3" ry="6" transform="rotate(-40 15 12)"/><ellipse cx="18" cy="9" rx="3" ry="6" transform="rotate(-40 18 9)"/></g><path d="M1 2l13 11M14 1L1 13" stroke="#222" stroke-width="2"/></svg></button>
                <button class="opt" aria-label="工具条选项"></button>
            </div>
            <div class="toolbar at-tri">
                <button aria-label="三角形"><svg viewBox="0 0 24 24"><path d="M12 3l10 18H2z" fill="none" stroke="#222" stroke-width="1.500"/></svg></button>
                <button aria-label="表格"><svg viewBox="0 0 24 24"><path d="M2 2h20v19H2z" fill="#fff" stroke="#667"/><path d="M2 3h20" stroke="#5a2ac0" stroke-width="4"/><path d="M2 9h20M2 13h20M2 17h20M6 5v16M10 5v16M14 5v16M18 5v16" stroke="#889"/><path d="M17 14l5 9H12z" fill="#fff" stroke="#c11" stroke-width="1.500"/></svg></button>
                <button aria-label="点集"><svg viewBox="0 0 24 24"><use href="#fold"/><path d="M16 5v8M12 9h8M9 13v8M5 17h8M19 15v8M15 19h8" stroke="#000"/><path d="M15 8h3v3h-3zM8 16h3v3H8zM18 18h3v3h-3z" fill="#d11"/></svg></button>
                <button aria-label="圆集"><svg viewBox="0 0 24 24"><use href="#fold"/><g fill="none" stroke="#222" stroke-width="1.500"><circle cx="13" cy="8" r="4"/><circle cx="9" cy="18" r="4"/><circle cx="19" cy="19" r="4"/></g></svg></button>
                <button class="opt" aria-label="工具条选项"></button>
            </div>
            <div class="toolbar at-lock">
                <button aria-label="锁定"><svg viewBox="0 0 24 24"><use href="#lock"/></svg></button>
                <button aria-label="解锁"><svg viewBox="0 0 24 24"><use href="#lock"/></svg></button>
                <button class="opt" aria-label="工具条选项"></button>
            </div>
        </div>

        <div class="row">
            <div class="toolbar">
                <button aria-label="验证"><svg viewBox="0 0 24 24"><use href="#drv"/><use href="#tick" x="5" y="5" width="19" height="19"/></svg></button>
                <button aria-label="特征树"><svg viewBox="0 0 24 24"><use href="#drv" x="5"/><use href="#list"/><path d="M3 11v10h4M3 15h4" stroke="#223" fill="none"/><path d="M1 7h4v4H1zM6 13h4v4H6zM6 19h4v4H6z" fill="#f4e860" stroke="#223"/></svg></button>
                <button aria-label="特征表"><svg viewBox="0 0 24 24"><path d="M1 2h21v19H1z" fill="#fff" stroke="#222"/><path d="M1 6h21M1 10h21M1 14h21M7 2v19" stroke="#222"/><path d="M2 18h20v3H2z" fill="#f4e030"/><use href="#drv" x="11" y="8"/></svg></button>
                <button aria-label="坐标轴"><svg viewBox="0 0 24 24"><path d="M3 9V2M1 4l2-3 2 3" stroke="#11c" fill="none" stroke-width="1.500"/><path d="M3 10l9-5v9l-9 5zM12 14l7 5-7 4-9-4" fill="#fff" stroke="#222"/><path d="M14 12l8-4m-3-1l3 1-1 3" stroke="#1a3" fill="none" stroke-width="1.500"/><path d="M15 20l6 3m-3 0h4l-2-3" stroke="#c11" fill="none" stroke-width="1.500"/></svg></button>
                <button class="opt" aria-label="工具条选项"></button>
            </div>
        </div>
    </div>

    <div class="selbar">
        <span class="combo w-filter"><select aria-label="类型过滤器"><option>没有选择过滤器</option></select><i></i></span>
        <span class="combo w-scope"><select aria-label="选择范围"><option>仅在工作部件内</option></select><i></i></span>
        <button class="s w27" aria-label="部件间"><svg viewBox="0 0 20 20"><path d="M3 4h5v5H3zM3 12h5v5H3zM9 2v16" fill="#aaa" stroke="#888"/><circle cx="14" cy="7" r="3" fill="none" stroke="#888" stroke-width="2"/><circle cx="14" cy="13" r="3" fill="none" stroke="#888" stroke-width="2"/></svg></button>
        <i class="sep"></i>
        <button class="s" aria-label="重置过滤器"><svg viewBox="0 0 20 20"><path d="M8 4L3 8l4 4M3 8h9V5" stroke="#899" stroke-width="2" fill="none"/><path d="M9 9h9l-3 4v5l-2-1v-4z" fill="#a8a090"/></svg></button>
        <button class="s" aria-label="过滤"><svg viewBox="0 0 20 20"><path d="M2 2h16v16H2z" fill="#f4e0e0" stroke="#d33"/><path d="M8 3v12M2 9h12" stroke="#c44"/><path d="M8 8h11l-4 5v5l-3-2v-3z" fill="#f4d020" stroke="#a07808"/></svg></button><button class="dd" aria-label="展开"></button>
        <button class="s" aria-label="撤消选择"><svg viewBox="0 0 20 20"><path d="M3 2v5h5M3 7q5-6 9-1 2 2 1 5" stroke="#10186a" stroke-width="1.500" fill="none"/><circle cx="13" cy="14" r="3.500" fill="#fff" stroke="#c11"/><path d="M13 8v12M7 14h12" stroke="#c11"/></svg></button>
        <button class="s" aria-label="查找"><svg viewBox="0 0 20 20"><path d="M2 6l5-4 7 3v5h4v8h-5v-6l-4-3-6 1z" fill="#999"/></svg></button>
        <i class="sep"></i>
        <button class="s" aria-label="矩形选择"><svg viewBox="0 0 20 20"><path d="M3 4h14v13H3z" fill="none" stroke="#111" stroke-dasharray="2 2"/><path d="M15 2h4v4h-4zM1 15h4v4H1z" fill="#c22"/></svg></button><button class="dd" aria-label="展开"></button>
        <i class="sep"></i>
        <button class="s" aria-label="高亮"><svg viewBox="0 0 20 20"><path d="M2 11l5-8 7-1 5 6-3 7-7 3-6-3z" fill="#dfe6f8" stroke="#3a4a88"/><path d="M9 10l4-4 5 3M9 10v8M3 12l6-2" stroke="#c44" fill="none"/></svg></button>
        <button class="s" aria-label="隐藏边"><svg viewBox="0 0 20 20"><path d="M2 6l7-4 9 3v10l-8 4-8-4z" fill="#9fc4f4" stroke="#3a6ac0"/><path d="M10 8v11M2 6l8 2 8-3" stroke="#e06060" fill="none"/></svg></button>
        <span class="combo off w-face"><select aria-label="面规则" disabled><option>相切的面</option></select><i></i></span>
        <span class="combo off w-body"><select aria-label="体规则" disabled><option>单个体</option></select><i></i></span>
        <button class="s w27" aria-label="下一步"><svg viewBox="0 0 20 20"><path d="M5 7h5V4l6 6-6 6v-3H5z" fill="#888"/></svg></button>
        <i class="sep"></i>
        <button class="s on" aria-label="启用捕捉"><svg viewBox="0 0 20 20"><path d="M1 3l4 3-4 3z" fill="#1a3"/><path d="M1 11l4 3-4 3z" fill="#c11"/><path d="M12 3v15M5 10h14M7 5l10 10M17 5L7 15" stroke="#222"/><circle cx="12" cy="10" r="2.500" fill="#ee3" stroke="#222"/><path d="M11 2h2v3h-2zM11 15h2v3h-2zM5 9h3v2H5zM16 9h3v2h-3z" fill="#222"/></svg></button>
        <button class="s" aria-label="清除捕捉"><svg viewBox="0 0 20 20"><path d="M8 2v13M2 8h13M4 4l9 9M13 4l-9 9" stroke="#222"/><circle cx="8" cy="8" r="2.500" fill="#ee3" stroke="#222"/><path d="M18 9v7h-7m2-3l-3 3 3 3" stroke="#2a8a8a" stroke-width="2" fill="none"/></svg></button>
        <button class="s on" aria-label="终点"><svg viewBox="0 0 20 20"><path d="M3 17L16 4" stroke="#222"/><circle cx="16" cy="4" r="2" fill="#c11"/></svg></button>
        <button class="s on" aria-label="中点"><svg viewBox="0 0 20 20"><path d="M3 17L17 3" stroke="#222"/><circle cx="10" cy="10" r="2" fill="#c11"/></svg></button>
        <button class="s" aria-label="控制点"><svg viewBox="0 0 20 20"><path d="M4 3q6 0 6 6t6 7" stroke="#222" fill="none" stroke-width="1.500"/><circle cx="10" cy="9" r="2" fill="#c11"/></svg></button>
        <button class="s" aria-label="交点"><svg viewBox="0 0 20 20"><path d="M10 3v14M3 14q7-9 14 0" stroke="#222" fill="none" stroke-width="1.500"/><circle cx="10" cy="10" r="2" fill="#c11"/></svg></button>
        <button class="s on" aria-label="圆心"><svg viewBox="0 0 20 20"><circle cx="10" cy="10" r="7" fill="none" stroke="#222" stroke-width="1.500"/><circle cx="10" cy="10" r="2" fill="#c11"/></svg></button>
        <button class="s" aria-label="象限点"><svg viewBox="0 0 20 20"><circle cx="10" cy="10" r="6" fill="none" stroke="#222"/><g fill="#c11"><circle cx="10" cy="4" r="2"/><circle cx="10" cy="16" r="2"/><circle cx="4" cy="10" r="2"/><circle cx="16" cy="10" r="2"/></g></svg></button>
        <button class="s on" aria-label="现有点"><svg viewBox="0 0 20 20"><path d="M10 3v14M3 10h14" stroke="#111" stroke-width="1.500"/><circle cx="10" cy="10" r="2" fill="#c11"/></svg></button>
        <button class="s" aria-label="曲线上的点"><svg viewBox="0 0 20 20"><path d="M5 16L16 4" stroke="#222" stroke-width="1.500"/><circle cx="9" cy="12" r="2" fill="#c11"/></svg></button>
        <button class="s" aria-label="面上的点"><svg viewBox="0 0 20 20"><path d="M4 5q6-4 13-2-4 6-3 13-4-3-9 1-3-7-1-12z" fill="url(#gb)" stroke="#3a6ac0"/><circle cx="11" cy="7" r="2" fill="#c11"/></svg></button>
        <button class="s" aria-label="点构造器"><svg viewBox="0 0 20 20"><path d="M12 1v10M7 6h10" stroke="#111" stroke-width="1.500"/><path d="M3 9q0 6 6 6m-3-3l3 3-3 3" stroke="#e08020" stroke-width="2" fill="none"/><path d="M11 16h2v2h-2zM15 16h2v2h-2zM19 16h1v2h-1z" fill="#111"/></svg></button>
        <i class="sep"></i>
        <button class="s" aria-label="栅格"><svg viewBox="0 0 20 20"><path d="M5 2l10 3v13L5 14zM5 6l10 3M5 10l10 4M8 3v12M12 4v13" fill="none" stroke="#222" stroke-width="1.500"/><circle cx="12" cy="9" r="2" fill="#c11"/></svg></button>
        <button class="opt end" aria-label="工具条选项"></button>
    </div>

    <div class="status">
        <p class="cue">选择对象以定义平面</p>
        <p class="info">对象 已选定 - 全部 4</p>
        <i class="cell c20"></i>
        <i class="cell c36"></i>
        <div class="cell tools">
            <svg viewBox="0 0 16 16"><path d="M0 0h16v16H0z" fill="#8a9ca4"/><path d="M3 4l9-1-1 7-6 1zM4 4l3 10" fill="#a8a8a8" stroke="#667"/><path d="M6 4h2v3H6zM9 7h2v3H9z" fill="#667"/></svg>
            <svg viewBox="0 0 16 16"><path d="M1 4V1h3M12 1h3v3M15 12v3h-3M4 15H1v-3" fill="none" stroke="#444" stroke-width="1.500"/><path d="M3 4h10v9H3z" fill="#fff" stroke="#444"/><path d="M5 6h6v5H5z" fill="#2a72d4"/></svg>
        </div>
    </div>

    <main class="work">
        <aside class="resbar">
            <button aria-label="装配导航器"><svg viewBox="0 0 24 28"><path d="M2 4l5-2 3 2v5l-4 2-4-2zM8 8l5-2 3 2v5l-4 1-4-2z" fill="#fbd028" stroke="#a87808"/><path d="M14 12h10" stroke="#222"/><path d="M4 14v12M4 20h8" stroke="#22b" stroke-width="1.500"/><path d="M14 19l5-2 3 2v4l-5 2-3-2z" fill="#fbd028" stroke="#a87808"/></svg></button>
            <button aria-label="约束导航器"><svg viewBox="0 0 24 28"><path d="M3 2l8 5-8 5zM20 2l-8 5 8 5z" fill="#1a1ac0"/><path d="M12 1v26" stroke="#222" stroke-dasharray="3 1"/><path d="M1 17h9v9H1z" fill="#ffe828" stroke="#222"/><path d="M14 16l9 10h-9z" fill="#c81414" stroke="#511"/></svg></button>
            <button class="cur" aria-label="部件导航器"><svg viewBox="0 0 24 28"><path d="M2 3q5-3 10 0v7q-5 3-10 0z" fill="#c050a8" stroke="#701a60"/><ellipse cx="7" cy="3" rx="5" ry="2" fill="#e8a0d8" stroke="#701a60"/><path d="M14 10h9" stroke="#222" stroke-width="1.500"/><path d="M5 14v11M5 20h6" stroke="#22b" stroke-width="1.500"/><circle cx="17" cy="20" r="5" fill="none" stroke="#a02a6a" stroke-width="1.500"/><circle cx="17" cy="20" r="2" fill="none" stroke="#a02a6a"/></svg></button>
            <button class="gap" aria-label="重用库"><svg viewBox="0 0 24 28"><path d="M1 7l4-4h18v18l-4 4H1z" fill="#f09020" stroke="#8a4a08"/><path d="M7 7h6v18H7z" fill="#20a838"/><path d="M13 7l4-4h7v17l-5 5h-6z" fill="#3a80e0" stroke="#1a4a9c"/><path d="M1 7l4-4h18l-5 4z" fill="#f4f4f4" stroke="#555"/><path d="M7 7l4-4M13 7l4-4" stroke="#555"/><path d="M13 7v18M7 7v18M18 7v18" stroke="#eee"/></svg></button>
            <button class="gap" aria-label="HD3D"><svg viewBox="0 0 24 28"><circle cx="9" cy="17" r="8" fill="#2a72c8" stroke="#1a4a90"/><path d="M9 15v7M7 15h2M7 22h5" stroke="#fff" stroke-width="2"/><circle cx="9" cy="11" r="1.500" fill="#fff"/><path d="M9 7q8-1 9 9M8 3q14-1 15 13" fill="none" stroke="#5a94d8" stroke-width="2.500"/></svg></button>
            <button class="gap" aria-label="网页浏览器"><svg viewBox="0 0 24 28"><path d="M4 3h12l5 5v17H4z" fill="#fff" stroke="#3a6ac0" stroke-width="1.500"/><path d="M16 3v5h5" fill="#c8dcff" stroke="#3a6ac0"/><circle cx="12" cy="17" r="6" fill="#2a84c0"/><path d="M8 18q3-8 6-4 4 2 1 7-4-1-7-3z" fill="#3aa048"/></svg></button>
            <button aria-label="历史记录"><svg viewBox="0 0 24 28"><circle cx="12" cy="14" r="11" fill="#dce8f8" stroke="#555" stroke-width="1.500"/><circle cx="12" cy="14" r="8" fill="none" stroke="#3a5a90" stroke-dasharray="1 3"/><path d="M12 6v8h7" fill="none" stroke="#222" stroke-width="2"/></svg></button>
            <button aria-label="系统材料"><svg viewBox="0 0 24 28"><path d="M2 7l5-2v17l-5 3z" fill="#eee" stroke="#444"/><path d="M7 5h16v17H7z" fill="#fff" stroke="#444"/><g><circle cx="12" cy="9" r="2" fill="#38c"/><circle cx="12" cy="14" r="2" fill="#2a4"/><circle cx="12" cy="19" r="2" fill="#d33"/></g><path d="M16 9h5M16 14h5M16 19h5" stroke="#999"/></svg></button>
            <button aria-label="可视化"><svg viewBox="0 0 24 28"><path d="M2 2h9v23H2z" fill="url(#rb)"/><path d="M13 9l9 15" stroke="#111" stroke-width="3"/><path d="M11 3l1 4 4-1-2 4-4-1-1-3z" fill="#fff"/></svg></button>
            <button aria-label="加工向导"><svg viewBox="0 0 24 28"><path d="M4 3h6v20H4zM4 7h6M4 11h6M4 15h6M4 19h6" fill="#8ac0f0" stroke="#3a80c8"/><path d="M10 10l13 0-6 6M10 17h8" stroke="#3a80c8" fill="none" stroke-width="1.500"/><path d="M2 24h10" stroke="#d8b060" stroke-width="2"/><path d="M13 9l9 14" stroke="#111" stroke-width="3"/><path d="M11 3l1 4 4-1-2 4-3-1z" fill="#fff"/></svg></button>
            <button aria-label="角色"><svg viewBox="0 0 24 28"><circle cx="17" cy="7" r="5" fill="#f0b070" stroke="#a86a18"/><path d="M10 18q1-6 7-6t7 6z" fill="#2a8a3a"/><circle cx="7" cy="14" r="4" fill="#d89868" stroke="#6a3a28" stroke-width="2"/><path d="M1 26q0-7 6-7t7 7z" fill="#8a4ac8"/></svg></button>
            <button aria-label="系统场景"><svg viewBox="0 0 24 28"><path d="M2 7l5-2v17l-5 3z" fill="#eee" stroke="#444"/><path d="M7 5h16v17H7z" fill="#fff" stroke="#444"/><path d="M10 7h11v11H10z" fill="#d02a2a"/><path d="M13 7h5v7h-5z" fill="#8ad0f8"/><path d="M12 17l4-4 4 4z" fill="#fff"/></svg></button>
        </aside>
        <!-- 图形窗口 -->
        <svg class="scene" viewBox="42 301 1878 703" preserveAspectRatio="xMinYMin slice">
            <path d="M733.300 541L827.700 513.600L826 574L731.700 601.300z" fill="#e09a60" fill-opacity=".3"/>
            <path d="M711.700 679L779.300 557.300L999 493L1151.300 549L1014.700 790.300z" fill="#ffd008"/>
            <path d="M711.700 679L1014.700 790.300L1010 989.700L706.700 878z" fill="#774800"/>
            <path d="M1014.700 790.300L1151.300 549L1146.700 747.800L1010 989.700z" fill="#b86e00"/>
            <g fill="none" stroke="#6cae62">
                <path d="M779.300 557.300L847.700 437L999 493L1151.300 549L1014.700 790.300L711.700 679L706.700 878L1010 989.700L1146.700 747.800L1151.300 549M1014.700 790.300L1010 989.700M847.700 437L845.700 538M711.700 679L779.300 557.300"/>
                <path d="M740 628L779.300 557.300L999 493" stroke="#333"/>
            </g>
            <path d="M733.300 541L827.700 513.600L826 574L731.700 601.300z" fill="none" stroke="#e87c14" stroke-width="2" stroke-linejoin="round"/>
            <path d="M779 557L770 536" stroke="#e07010" stroke-width="2"/>
            <path d="M764 526L775 535Q772 541 767 540z" fill="#d8700c"/>
            <ellipse cx="771" cy="538" rx="4" ry="2.500" fill="#8a4400" transform="rotate(-20 771 538)"/>
            <circle cx="779.300" cy="557.300" r="4.500" fill="#e07a18"/>
            <circle cx="862.700" cy="733.500" r="4" fill="#e87812"/>
            <!-- 光标 -->
            <g fill="none" shape-rendering="crispEdges">
                <path d="M864.500 301V517M864.500 582V735M864.500 936V1004M42 549.500H832M897 549.500H1920" stroke="#1c1c1c"/>
                <path d="M864.500 735V936" stroke="#b8a0b8"/>
                <path d="M897 549.500H1151" stroke="#5a4a30"/>
            </g>
            <circle cx="864.500" cy="549.500" r="11.500" fill="none" stroke="#fff4b0" stroke-width="3" stroke-dasharray="12 6" stroke-dashoffset="-3"/>
            <circle cx="864.500" cy="549.500" r="11.500" fill="none" stroke="#111" stroke-dasharray="12 6" stroke-dashoffset="-3"/>
            <path d="M864.500 534v31M849 549.500h31" stroke="#111" stroke-width="3"/>
            <path d="M864.500 535v29M850 549.500h29" stroke="#fff"/>
            <!-- WCS -->
            <path d="M1010 990L1024 957L1032 951L1030 961z" fill="#e04040"/>
            <path d="M1011 988L1027 957" stroke="#fbb"/>
            <path d="M1010 990L975 979L961 972L978 975z" fill="#1f8a30"/>
            <path d="M1010 956L1013 968L1010 989L1007 968z" fill="#001a90"/>
            <g font-size="13">
                <text x="959" y="967" fill="#3a9a2a">YC</text>
                <text x="993" y="956" fill="#3030d8">ZC</text>
                <text x="1015" y="946" fill="#e03c3c">XC</text>
            </g>
            <!-- 视图三重轴 -->
            <path d="M78 923L88 907L109 915L109 934L100 943L78 938z" fill="#bbb" fill-opacity=".5" stroke="#aaa"/>
            <path d="M78 923L100 929L109 915M100 929V943M88 907L86 922L78 938M86 922L107 930" fill="none" stroke="#aaa"/>
            <path d="M95 944L72 935" stroke="#1f8a30" stroke-width="2"/><path d="M64 932L76 933L73 938z" fill="#1f8a30"/>
            <path d="M102 942L112 924" stroke="#e04040" stroke-width="2"/><path d="M116 917L115 927L109 924z" fill="#d83030"/>
            <path d="M100 943V925" stroke="#001a90" stroke-width="4"/><path d="M100 921L103 930H97z" fill="#001a90"/>
            <circle cx="99" cy="946" r="4" fill="#999"/><circle cx="98" cy="945" r="2" fill="#ddd"/>
            <g font-size="12">
                <text x="56" y="936" fill="#3a9a4a">Y</text>
                <text x="97" y="923" fill="#3a4af0">Z</text>
                <text x="114" y="918" fill="#e04848">X</text>
            </g>
        </svg>
    </main>

    <div class="row bottom">
        <div class="toolbar at-sketch">
            <button aria-label="草图"><svg viewBox="0 0 24 24"><path d="M3 2l14 3v17L3 19z" fill="#fff" stroke="#111"/><path d="M5 5l4 1v4l-4-1zM5 12l4 1v5l-4-1zM11 14l4 1v4l-4-1zM11 7l4 1v3l-4-1z" fill="none" stroke="#111"/><path d="M18 1l1 5 5 1-4 3 1 5-4-3-4 2 1-5-3-3 5-1z" fill="#ee2" stroke="#990" stroke-width=".5"/></svg></button>
            <button class="wide off" disabled><svg viewBox="0 0 24 24"><path d="M0 0h24v24H0z" fill="#7f97a0"/><path d="M5 5l15-2-2 12-10 2z" fill="#999" stroke="#667"/><path d="M5 5l4 17" stroke="#445"/><path d="M8 5h3v3H8zM14 4h3v3h-3zM11 8h3v3h-3zM16 8h2v3h-2zM8 12h3v3H8zM14 11h3v3h-3z" fill="#566068"/></svg>完成草图</button>
            <button aria-label="轮廓"><svg viewBox="0 0 24 24"><path d="M3 1v17q0 4 4 4t4-4v-8q0-3 4-3t4 3v4" fill="none" stroke="#222" stroke-width="1.500"/><g fill="#d11"><circle cx="3" cy="13" r="2.500"/><circle cx="11" cy="13" r="2.500"/><circle cx="20" cy="13" r="2.500"/></g></svg></button>
            <button aria-label="直线"><svg viewBox="0 0 24 24"><path d="M4 20L20 4" stroke="#222" stroke-width="1.500"/><circle cx="4" cy="20" r="2.500" fill="#d11"/><circle cx="20" cy="4" r="2.500" fill="#d11"/></svg></button>
            <button aria-label="圆弧"><svg viewBox="0 0 24 24"><path d="M3 4Q20 3 21 20" fill="none" stroke="#222" stroke-width="1.500"/><g fill="#d11"><circle cx="3" cy="4" r="2.500"/><circle cx="16" cy="8" r="2.500"/><circle cx="21" cy="20" r="2.500"/></g></svg></button>
            <button aria-label="圆"><svg viewBox="0 0 24 24"><circle cx="12" cy="12" r="10" fill="none" stroke="#222" stroke-width="1.500"/></svg></button>
            <button aria-label="圆角"><svg viewBox="0 0 24 24"><path d="M2 2h20v20" fill="none" stroke="#aaa"/><path d="M10 2q12 0 12 9" fill="none" stroke="#b09098" stroke-width="1.500"/></svg></button>
            <button aria-label="倒斜角"><svg viewBox="0 0 24 24"><path d="M1 2h21v20" fill="none" stroke="#aaa"/><path d="M12 2l10 9" fill="none" stroke="#c09098" stroke-width="1.500"/></svg></button>
            <button aria-label="矩形"><svg viewBox="0 0 24 24"><path d="M3 5h19v14H3z" fill="none" stroke="#222" stroke-width="1.500"/><circle cx="3" cy="5" r="2.500" fill="#d11"/><circle cx="21" cy="19" r="2.500" fill="#d11"/></svg></button>
            <button aria-label="艺术样条"><svg viewBox="0 0 24 24"><path d="M2 11q5 1 6-8M8 3q1 10 5 12t9-5" fill="none" stroke="#222"/><path d="M2 11l6-8 3 14 11-5" stroke="#888" fill="none"/><g fill="#d11"><circle cx="7" cy="10" r="2.500"/><circle cx="14" cy="15" r="2.500"/></g><g fill="#888"><circle cx="8" cy="3" r="2"/><circle cx="3" cy="12" r="2"/><circle cx="14" cy="21" r="2"/><circle cx="22" cy="11" r="2"/></g></svg></button>
            <button aria-label="点"><svg viewBox="0 0 24 24"><path d="M12 3v18M3 12h18" stroke="#111" stroke-width="2"/></svg></button>
            <button aria-label="偏置曲线"><svg viewBox="0 0 24 24" fill="none" stroke="#999" stroke-width="1.500"><path d="M2 22V9q1-7 8-7 7 1 7 6l5 6q1 6-5 8z"/><path d="M7 18v-8q1-4 4-4 3 1 3 5l4 4q0 2-3 3z" stroke="#c0a0a0"/></svg></button><button class="dd" aria-label="展开"></button>
            <i class="sep"></i>
            <button aria-label="快速修剪"><svg viewBox="0 0 24 24"><path d="M2 12h14M5 3l9 19" stroke="#999"/><path d="M14 10l5-7 3 3-5 8z" fill="#a09080"/></svg></button>
            <button aria-label="快速延伸"><svg viewBox="0 0 24 24"><path d="M2 12h14M5 3l9 19" stroke="#999"/><path d="M13 15l8-13" stroke="#a89c88" stroke-width="3"/></svg></button>
            <button aria-label="拐角"><svg viewBox="0 0 24 24"><path d="M2 12h21M12 2v20" stroke="#999"/><path d="M6 4l12 12" stroke="#b898a0"/></svg></button>
            <i class="sep"></i>
            <button aria-label="自动尺寸"><svg viewBox="0 0 24 24"><path d="M2 10v12M22 10v12M2 16h20M5 14l-3 2 3 2M19 14l3 2-3 2" fill="none" stroke="#888" stroke-width="1.500"/><path d="M15 1L8 12l4-1-4 9 9-12-4 1 4-8z" fill="#b0b0a0" stroke="#888"/></svg></button><button class="dd" aria-label="展开"></button>
            <i class="sep"></i>
            <button aria-label="几何约束"><svg viewBox="0 0 24 24"><path d="M2 14l7-10M6 15l7-10M17 9v11M11 20h11" stroke="#999" stroke-width="1.500"/></svg></button>
            <button aria-label="设为对称"><svg viewBox="0 0 24 24"><path d="M2 4h5v0M17 4h5v17H2V4M12 1v22M8 10V3m-2 3l2-3 2 3M16 10V3m-2 3l2-3 2 3" fill="none" stroke="#778" stroke-width="1.500"/></svg></button>
            <button aria-label="显示约束"><svg viewBox="0 0 24 24"><path d="M1 8l6 5-6 5z" fill="#8a9a8a"/><path d="M9 13l8-11M13 14l8-11M16 13v9M11 22h10" stroke="#999" stroke-width="1.500"/></svg></button><button class="dd" aria-label="展开"></button>
            <i class="sep"></i>
            <button aria-label="转换参考"><svg viewBox="0 0 24 24"><path d="M2 1h9v10H2zM13 13h9v9h-9z" fill="#ddd" stroke="#777"/><path d="M2 15h7v7H2z" fill="#999" stroke="#666"/><path d="M12 15l9-10" stroke="#a89c80" stroke-width="3"/></svg></button>
            <button aria-label="备选解"><svg viewBox="0 0 24 24"><path d="M10 2q-8 0-8 5t8 4" fill="none" stroke="#777" stroke-width="2"/><path d="M3 14l8-4 9 3v7l-9 3-8-3z" fill="#8c8c94"/><path d="M12 10l9-9" stroke="#a89c80" stroke-width="3"/><path d="M17 15h5v7h-5z" fill="#777"/></svg></button>
            <button aria-label="更新模型"><svg viewBox="0 0 24 24"><path d="M10 2q-8 0-8 5t8 4" fill="none" stroke="#777" stroke-width="2"/><path d="M4 14l6-3V6l5 1v5l7 3v4l-9 4-9-4z" fill="#8c8c9c"/></svg></button>
            <button class="opt" aria-label="工具条选项"></button>
        </div>
    </div>

    <footer class="taskbar">
        <button class="win" aria-label="开始"><svg viewBox="0 0 16 16"><path d="M0 2l7-1v6H0zM8 1l8-1v7H8zM0 8h7v6l-7-1zM8 8h8v8l-8-1z" fill="#fff"/></svg></button>
        <button class="tv" aria-label="任务视图"><svg viewBox="0 0 22 16"><path d="M5 1h12v14H5zM3 3H1v10h2M19 3h2v10h-2" fill="none" stroke="#fff" stroke-width="1.500"/></svg></button>
        <i></i>
        <button class="app cur" aria-label="NX 8.5"><svg viewBox="0 0 24 24"><use href="#nx"/></svg></button>
        <button class="app" aria-label="浏览器"><svg viewBox="0 0 24 24"><circle cx="12" cy="12" r="10" fill="#5cc42c" stroke="#e8f8e0" stroke-width="2"/><path d="M2 20Q8 22 14 16M22 2Q15 0 9 6" stroke="#3aa018" stroke-width="2" fill="none"/><path d="M6 12h12q0-6-6-6t-6 6q0 6 6 6 4 0 5-3h-4q-3 1-4-3z" fill="#fff"/><path d="M9 11q1-3 3-3t3 3z" fill="#5cc42c"/></svg></button>
        <div class="school">
            <svg viewBox="0 0 32 32"><circle cx="16" cy="16" r="12" fill="#fff"/><circle cx="16" cy="16" r="14" fill="none" stroke="#aaa" stroke-width="3" stroke-dasharray="1 2"/><path d="M16 9l7 7-7 7-7-7z" fill="#111"/><path d="M17 12l-4 4 4 4" stroke="#fff" fill="none" stroke-width="1.500"/></svg>
            <strong>科迅教育</strong>
        </div>
    </footer>
    <p class="notice">屏幕录像专家未注册 <span>tlxsoft.com</span></p>

    <section class="dialog" aria-labelledby="dlg-title">
        <header>
            <button aria-label="对话框选项"><svg viewBox="0 0 16 16"><circle cx="8" cy="8" r="5" fill="none" stroke="#fff" stroke-width="2"/><circle cx="8" cy="8" r="1.500" fill="#fff"/><path d="M8 1v2M8 13v2M1 8h2M13 8h2M3 3l1.500 1.500M11.500 11.500L13 13M13 3l-1.500 1.500M4.500 11.500L3 13" stroke="#fff" stroke-width="2"/></svg></button>
            <h2 id="dlg-title">修剪体</h2>
            <button aria-label="关闭"><svg viewBox="0 0 16 16"><path d="M3 3l10 10M13 3L3 13" stroke="#fff" stroke-width="3"/></svg></button>
        </header>
        <div class="groups">
            <h3>目标<svg viewBox="0 0 12 12"><path d="M1 10l5-8 5 8" /></svg></h3>
            <div class="group target">
                <div class="line mark"><svg class="ok" viewBox="0 0 24 24"><use href="#tick"/></svg><span>选择体 (1)</span>
                    <button class="pick" aria-label="选择体"><svg viewBox="0 0 24 24"><path d="M2 6l10-5 10 5v12l-10 5-10-5z" fill="#ff8a20" stroke="#a03a00"/><path d="M2 6l10 5 10-5M12 11v12" stroke="#a03a00" fill="none"/></svg></button></div>
            </div>
            <h3>工具<svg viewBox="0 0 12 12"><path d="M1 10l5-8 5 8" /></svg></h3>
            <div class="group tool">
                <div class="line"><label for="opt">工具选项</label>
                    <span class="combo"><select id="opt"><option>新建平面</option></select><i></i></span></div>
                <div class="line mark hot"><svg class="ok" viewBox="0 0 24 24"><use href="#tick"/></svg><span>指定平面</span>
                    <button class="sq" aria-label="平面对话框"><svg viewBox="0 0 20 20"><path d="M7 2l10 2v11L7 12z" fill="#fff" stroke="#222"/><path d="M2 9q0 6 5 6m-2-3l3 3-3 3" stroke="#e08020" stroke-width="2" fill="none"/><path d="M10 16h2v2h-2zM13 16h2v2h-2zM16 16h2v2h-2z" fill="#111"/></svg></button>
                    <button class="split" aria-label="点和方向"><svg viewBox="0 0 24 24"><use href="#sheet"/><circle cx="10" cy="10" r="2.500" fill="#c11"/><path d="M7 16q8 1 9-6" stroke="#c11" fill="none" stroke-width="1.500"/></svg><i></i></button></div>
                <div class="line"><span>反向</span>
                    <button class="sq" aria-label="反向"><svg viewBox="0 0 20 20"><path d="M3 4l14 12" stroke="#222" stroke-width="1.500"/><path d="M12 8l4-4M8 12l-4 4" stroke="#11a" stroke-width="2"/><path d="M13 3h5v5zM2 12v5h5z" fill="#11a"/></svg></button></div>
            </div>
            <h3 class="shut">设置<svg viewBox="0 0 12 12"><path d="M1 2l5 8 5-8" /></svg></h3>
            <h3 class="shut">预览<svg viewBox="0 0 12 12"><path d="M1 2l5 8 5-8" /></svg></h3>
        </div>
        <div class="acts">
            <button class="go"><b>&lt;</b>确定<b>&gt;</b></button>
            <button>应用</button>
            <button>取消</button>
        </div>
    </section>

    <!-- 平面类型下拉菜单 -->
    <div class="planes">
        <button aria-label="自动判断"><svg viewBox="0 0 24 24"><use href="#sheet"/><path d="M20 1l-7 8 4 0-5 7 10-8h-4l4-6z" fill="#fd2" stroke="#870" stroke-width=".6"/></svg></button>
        <button aria-label="按某一距离"><svg viewBox="0 0 24 24"><path d="M2 8l8 2v12l-8-3zM13 8l9 2v12l-9-3z" fill="url(#gs)" stroke="#222"/><path d="M9 1L7 5M12 1l-2 4" stroke="#111"/><path d="M11 14h11M14 12l-3 2 3 2M19 12l3 2-3 2" stroke="#c11" fill="none" stroke-width="1.500"/></svg></button>
        <button aria-label="成一角度"><svg viewBox="0 0 24 24"><path d="M11 2l11 3v15l-11-3z" fill="url(#gs)" stroke="#222"/><path d="M1 18l10-1 12 3-11 1z" fill="#fff" stroke="#222"/><path d="M10 4Q4 7 5 15m-2-3l2 4 2-4" stroke="#c11" fill="none" stroke-width="1.500"/></svg></button>
        <button aria-label="二等分"><svg viewBox="0 0 24 24"><path d="M11 1l11 3v15l-11-3z" fill="#fff" stroke="#222"/><path d="M7 3l11 2v16L7 18z" fill="#fb3" stroke="#b42"/><path d="M2 5l11 3v15L2 20z" fill="url(#gs)" stroke="#222"/></svg></button>
        <button class="hot" aria-label="曲线和点"><svg viewBox="0 0 24 24"><use href="#sheet"/><circle cx="10" cy="10" r="2.500" fill="#c11"/><path d="M7 16q8 1 9-6" stroke="#c11" fill="none" stroke-width="1.500"/></svg></button>
        <button aria-label="两直线"><svg viewBox="0 0 24 24"><path d="M8 4l14 2v15L8 17z" fill="url(#gs)" stroke="#222"/><path d="M8 1v22M1 15l21 6" stroke="#c11"/></svg></button>
        <button class="sel" aria-label="相切"><svg viewBox="0 0 24 24"><path d="M2 3q5 1 7 3 3-3 6-1l7 2v15l-7-2q-3 0-6 2-3-3-7-4z" fill="#eaf6ff" stroke="#1a4a90"/><path d="M9 6v15M15 5v15" stroke="#1a4a90"/></svg></button>
        <button aria-label="通过对象"><svg viewBox="0 0 24 24"><path d="M8 2l14 3v14L8 15z" fill="url(#gs)" stroke="#222"/><circle cx="7" cy="17" r="5.500" fill="none" stroke="#c22"/></svg></button>
        <button aria-label="点和方向"><svg viewBox="0 0 24 24"><path d="M8 2l14 3v15L8 17z" fill="url(#gs)" stroke="#222"/><circle cx="14" cy="11" r="2" fill="#c11"/><path d="M13 11L2 16m3-3l-3 3 4 0" stroke="#c11" fill="none" stroke-width="1.500"/></svg></button>
        <button aria-label="曲线上"><svg viewBox="0 0 24 24"><path d="M4 2l14 3v16L4 17z" fill="url(#gs)" stroke="#222"/><path d="M1 22Q5 9 22 9" stroke="#222" fill="none" stroke-width="1.500"/><circle cx="10" cy="12" r="2.500" fill="#c11"/></svg></button>
        <button aria-label="YC-ZC 平面"><svg viewBox="0 0 24 24"><use href="#ucs"/><path d="M3 6l8-4v10l-8 5z" fill="#eef4ee" stroke="#222"/><text x="9" y="21" font-size="10">XC</text></svg></button>
        <button aria-label="XC-ZC 平面"><svg viewBox="0 0 24 24"><use href="#ucs"/><path d="M3 6l9 4v10l-9-3z" fill="#eef4ee" stroke="#222"/><text x="9" y="9" font-size="10">YC</text></svg></button>
        <button aria-label="XC-YC 平面"><svg viewBox="0 0 24 24"><use href="#ucs"/><path d="M3 18l10-4 9 4-10 4z" fill="#eef4ee" stroke="#222"/><text x="6" y="9" font-size="10">ZC</text></svg></button>
        <button aria-label="视图平面"><svg viewBox="0 0 24 24"><path d="M3 3l18 3v17L3 20z" fill="#fff8ec" stroke="#222"/><path d="M7 8l10 10M17 9L7 17M7 11V8h3M14 9h3v3M7 14v3h3M14 18h3v-3" stroke="#d85a18" stroke-width="1.500" fill="none"/></svg></button>
        <button aria-label="更少"><svg viewBox="0 0 24 24"><path d="M3 12l8-7v4h9v7h-9v4z" fill="#6cc4dc" stroke="#1a4a78"/></svg></button>
    </div>
</body>

</html>
```
FILE: styles.css
```css
* {
    box-sizing: border-box;
    margin: 0;
    padding: 0;
}

body {
    display: flex;
    flex-direction: column;
    height: 100vh;
    overflow: hidden;
    background: #ccc;
    color: #000;
    font: 12px/16px "Noto Sans CJK SC", sans-serif;
}

button {
    border: 0;
    background: none;
    color: inherit;
    font: inherit;
}

svg {
    display: block;
    flex: none;
}

.defs {
    position: absolute;
    width: 0;
    height: 0;
}

/* 标题栏 */
.titlebar {
    display: flex;
    align-items: center;
    flex: none;
    height: 23px;
    padding: 0 2px 0 3px;
    background: linear-gradient(#000 1px, #706e70 2px, #4a484a 7px, #1c1c1c 8px, #1c1c1c 21px, #000);
    color: #fff;
}

.logo {
    width: 16px;
    height: 16px;
}

.titlebar h1 {
    flex: 1;
    margin-left: 5px;
    font: 13px/20px "Noto Sans", "Noto Sans CJK SC", sans-serif;
}

.brand {
    margin-right: 29px;
    font: 800 13px/20px "Open Sans", sans-serif;
}

.winbtns {
    display: flex;
    gap: 3px;
}

.winbtns button {
    width: 20px;
    height: 20px;
    border: 1px solid #777;
    border-radius: 3px;
    background: linear-gradient(#666, #2c2c2c);
}

.winbtns .close {
    border-color: #f0a090;
    background: linear-gradient(#f08a70, #d83c1c);
}

.timer {
    position: absolute;
    z-index: 5;
    top: -28px;
    left: 1356px;
    width: 47px;
    height: 47px;
    padding-top: 25px;
    border: 2px solid #e8f4ea;
    border-radius: 50%;
    background: #3cc45a;
    box-shadow: 0 3px 8px rgba(0, 0, 0, .4);
    color: #fff;
    font: 700 12px/16px "Open Sans", sans-serif;
    text-align: center;
}

/* 工具条停靠区 */
.docks {
    flex: none;
    background: linear-gradient(#e6e6e6, #cacaca);
    box-shadow: inset 0 -1px #8f8f8f;
}

.row {
    display: flex;
    height: 34px;
}

.toolbar {
    display: flex;
    align-items: center;
    height: 34px;
    border-top: 1px solid #f2f2f2;
    border-bottom: 1px solid #b8b8b8;
    background: rgba(255, 255, 255, .15);
    box-shadow: inset -1px 0 #bbb;
}

.toolbar::before {
    content: "";
    width: 2px;
    height: 22px;
    margin: 0 1px 0 4px;
    background: repeating-linear-gradient(#999 0 2px, transparent 2px 4px);
}

.at-view {
    margin-left: 503px;
}

.at-utility {
    margin-left: 700px;
}

.at-tri {
    margin-left: 93px;
}

.at-lock {
    margin-left: 31px;
}

.at-sketch {
    margin-left: 351px;
}

.toolbar button {
    display: flex;
    align-items: center;
    justify-content: center;
    width: 31px;
    height: 30px;
}

.toolbar svg {
    width: 24px;
    height: 24px;
}

.toolbar .wide {
    width: auto;
    gap: 3px;
    padding: 0 1px 0 3px;
    white-space: nowrap;
}

.toolbar .off {
    padding-right: 4px;
    gap: 2px;
    color: #999;
}

.toolbar .dd {
    width: 12px;
}

.selbar .dd {
    display: flex;
    align-items: center;
    justify-content: center;
    width: 10px;
}

.toolbar .opt {
    align-items: flex-end;
    width: 15px;
    padding-bottom: 6px;
}

.dd::after,
.opt::after {
    content: "";
    border: 3px solid transparent;
    border-top-color: #000;
    border-bottom: 0;
}

.sep {
    width: 2px;
    height: 30px;
    margin: 0 2px;
    border-left: 1px solid #b4b4b4;
    background: #f6f6f6;
}

.selbar .sep {
    height: 24px;
}

.upload {
    display: flex;
    align-items: center;
    width: 104px;
    height: 25px;
    margin: 5px 107px 0 auto;
    overflow: hidden;
    border: 1px solid #5a8fe8;
    border-radius: 4px;
    background: #e8f1ff;
    color: #6c9cf0;
}

.upload svg {
    width: 29px;
    height: 24px;
    padding: 1px 2px;
    background: #5b97fa;
}

.upload span {
    flex: 1;
    text-align: center;
}

.menubar {
    align-items: center;
    height: 24px;
    padding: 0 5px 1px 8px;
    border-top: 1px solid #f4f4f4;
    border-bottom: 1px solid #b8b8b8;
}

.menubar > svg {
    width: 16px;
    height: 16px;
}

.menubar ul {
    display: flex;
    flex: 1;
    gap: 13px;
    margin-left: 6px;
    list-style: none;
    white-space: nowrap;
}

.menubar li {
    width: 42px;
}

.menubar .m4 {
    width: 54px;
}

.menubar .m6 {
    width: 72px;
}

.menubar .right {
    text-align: right;
}

.mdi {
    display: flex;
    gap: 2px;
}

.mdi button {
    width: 17px;
    height: 17px;
    border: 1px solid #777;
    border-radius: 4px;
    background: #f2f2f2;
}

/* 选择条 */
.selbar {
    display: flex;
    align-items: center;
    flex: none;
    height: 28px;
    padding-left: 5px;
    border-bottom: 1px solid #b4b4b4;
    background: linear-gradient(#c2c2c2, #dcdcdc);
}

.combo {
    display: flex;
    height: 17px;
    border: 1px solid #777;
    border-radius: 3px;
    background: #fff;
}

.combo select {
    flex: 1;
    min-width: 0;
    padding-left: 1px;
    border: 0;
    background: none;
    color: #000;
    font: inherit;
    line-height: 15px;
    appearance: none;
}

.combo i {
    display: flex;
    align-items: center;
    justify-content: center;
    width: 17px;
    border-left: 1px solid #4a78b8;
    border-radius: 0 2px 2px 0;
    background: linear-gradient(#d8ecff, #6aaaf0);
}

.combo i::after {
    content: "";
    border: 5px solid transparent;
    border-top: 6px solid #111;
    border-bottom: 0;
}

.combo.off {
    border-color: #aaa;
    background: #d2d2d2;
}

.off select {
    color: #999;
    opacity: 1;
}

.combo.off i {
    border-color: #aaa;
    background: #e4e4e4;
}

.combo.off i::after {
    border-top-color: #999;
}

.w-filter {
    width: 111px;
    margin-right: 8px;
}

.w-scope {
    width: 117px;
}

.w-face {
    width: 129px;
    margin-right: 8px;
}

.w-body {
    width: 117px;
}

.s {
    display: flex;
    align-items: center;
    justify-content: center;
    width: 23px;
    height: 22px;
    border: 1px solid transparent;
}

.s svg {
    width: 18px;
    height: 18px;
}

.s.on {
    border-color: #333;
    border-radius: 3px;
    background: #fff;
}

.w27 {
    width: 27px;
}

.end {
    margin: 12px 5px 0 auto;
}

/* 提示行 */
.status {
    display: flex;
    flex: none;
    height: 22px;
    padding-right: 2px;
    border-top: 1px solid #f4f4f4;
    border-bottom: 1px solid #8f8f8f;
    background: #dadada;
    font-weight: 700;
    line-height: 19px;
}

.cue {
    width: 912px;
    padding-left: 3px;
    border-right: 1px solid #f6f6f6;
}

.info {
    flex: 1;
    padding-left: 2px;
}

.cell {
    border-left: 2px solid #f6f6f6;
    box-shadow: -1px 0 #b4b4b4;
}

.c20 {
    width: 20px;
}

.c36 {
    width: 36px;
}

.tools {
    display: flex;
    align-items: center;
    gap: 4px;
    padding: 0 2px;
}

.tools svg {
    width: 16px;
    height: 16px;
}

/* 资源条和图形窗口 */
.work {
    display: flex;
    flex: 1;
    min-height: 0;
    background: linear-gradient(#b4b5b6, #c0c1c2 18%, #cacbcd 36%, #d9dadc 52%, #e5e7e8 70%, #e6e8e9);
}

.resbar {
    display: flex;
    flex-direction: column;
    align-items: flex-end;
    gap: 2px;
    flex: none;
    width: 42px;
    padding-top: 16px;
    border-right: 9px solid #ededed;
    background: linear-gradient(90deg, #b4b4b4 26px, #8c8c8c);
}

.resbar button {
    display: flex;
    align-items: center;
    width: 26px;
    height: 40px;
    padding-left: 1px;
    border: 1px solid #777;
    border-right: 0;
    border-radius: 4px 0 0 4px;
    background: #d8d8d8;
}

.resbar .cur {
    width: 29px;
    height: 42px;
    padding-left: 4px;
    background: #ededed;
}

.resbar .gap {
    margin-bottom: 12px;
}

.resbar svg {
    width: 22px;
    height: 26px;
}

.scene {
    flex: 1;
    min-width: 0;
    height: 100%;
    font-family: "Open Sans", sans-serif;
}

.bottom {
    flex: none;
    height: 36px;
    padding-top: 1px;
    background: linear-gradient(#e2e4e5, #cecece);
}

/* 任务栏 */
.taskbar {
    display: flex;
    flex: none;
    height: 40px;
    background: linear-gradient(90deg, #080c18 60%, #101010 75%);
}

.taskbar button {
    display: flex;
    align-items: center;
    justify-content: center;
    width: 48px;
}

.taskbar .win svg {
    width: 16px;
    height: 16px;
}

.taskbar .tv svg {
    width: 22px;
    height: 16px;
}

.taskbar > i {
    width: 4px;
    height: 16px;
    margin: 12px 13px 0 6px;
    border: 1px solid #3a3e4a;
    border-width: 0 1px;
}

.taskbar .app {
    width: 40px;
    border-bottom: 2px solid #76aee6;
}

.taskbar .cur {
    width: 48px;
    margin-right: 5px;
    background: #383c48;
}

.app svg {
    width: 24px;
    height: 24px;
}

.school {
    display: flex;
    gap: 6px;
    height: 40px;
    margin: 0 34px 0 auto;
    overflow: hidden;
    color: #fff;
    font-size: 32px;
    line-height: 36px;
}

.school strong {
    font-weight: 900;
}

.school svg {
    width: 32px;
    height: 32px;
    margin-top: 2px;
}

.notice {
    position: absolute;
    right: 0;
    bottom: 0;
    z-index: 2;
    padding: 0 2px;
    background: #fff;
    color: #e00000;
    font-size: 14px;
    font-weight: 700;
    line-height: 17px;
}

.notice span {
    font-family: "Liberation Mono", monospace;
}

/* 修剪体对话框 */
.dialog {
    position: absolute;
    top: 384px;
    left: 233px;
    z-index: 3;
    width: 290px;
    border: 1px solid #555;
    border-bottom: 9px solid #1c1c1c;
    border-radius: 6px;
    background: #ececec;
}

.dialog header {
    display: flex;
    align-items: center;
    height: 22px;
    border-radius: 5px 5px 0 0;
    background: linear-gradient(#777, #444 7px, #1c1c1c 8px);
    color: #fff;
}

.dialog header button {
    display: flex;
    align-items: center;
    justify-content: center;
    width: 21px;
    height: 20px;
    border-right: 1px solid #bbb;
}

.dialog header button:last-child {
    border-right: 0;
    border-left: 1px solid #bbb;
}

.dialog header svg {
    width: 14px;
    height: 14px;
}

.dialog h2 {
    flex: 1;
    padding-left: 9px;
    font-size: 13px;
    line-height: 16px;
}

.groups {
    margin: 3px 5px 3px 6px;
    border-right: 1px solid #999;
}

.groups h3 {
    display: flex;
    align-items: center;
    justify-content: space-between;
    height: 23px;
    padding: 0 5px 1px 6px;
    border-bottom: 1px solid #999;
    background: linear-gradient(#fdfdfd 50%, #e4e4e4 55%, #dcdcdc);
    font-size: 13px;
}

.groups h3 svg {
    width: 12px;
    height: 12px;
    fill: none;
    stroke: #555;
    stroke-width: 2;
}

.groups .shut svg {
    width: 17px;
    height: 22px;
    padding: 5px 0 5px 5px;
    border-left: 1px solid #aaa;
}

.group {
    padding: 0 9px 0 6px;
    border-left: 2px solid #aaa;
    background: #d2d2d2;
}

.target {
    height: 47px;
    padding-top: 7px;
}

.tool {
    padding-top: 2px;
    padding-bottom: 7px;
}

.line {
    display: flex;
    align-items: center;
    height: 28px;
}

.line span:not(.combo) {
    margin-right: auto;
}

.line.mark {
    height: 30px;
    gap: 4px;
    padding-left: 1px;
}

.ok {
    width: 14px;
    height: 14px;
}

.line.hot {
    border-radius: 5px;
    background: linear-gradient(90deg, #e3a468 40%, #d2d2d2 68%);
}

.line .combo {
    width: 107px;
    height: 18px;
    margin-left: auto;
}

.line .combo select {
    padding-left: 4px;
}

.pick,
.sq,
.split {
    display: flex;
    align-items: center;
    justify-content: center;
    border: 1px solid #777;
    border-radius: 3px;
    background: linear-gradient(#fafafa, #d8d8d8);
}

.pick {
    width: 30px;
    height: 30px;
}

.pick svg {
    width: 24px;
    height: 24px;
}

.sq {
    width: 22px;
    height: 22px;
}

.sq svg {
    width: 18px;
    height: 18px;
}

.split {
    width: 47px;
    height: 30px;
    border-color: #7a4a30;
    background: linear-gradient(#fbd0b0, #f49a60 50%, #ffd8b8);
}

.split svg {
    width: 24px;
    height: 24px;
    margin: 0 3px;
}

.split i {
    display: flex;
    align-items: center;
    justify-content: center;
    flex: 1;
    height: 28px;
    border-left: 1px solid #c87848;
}

.split i::after {
    content: "";
    border: 4px solid transparent;
    border-top-color: #000;
    border-bottom: 0;
}

.acts {
    display: flex;
    justify-content: flex-end;
    gap: 7px;
    margin: 0 7px;
    padding: 5px 9px 11px;
    border-top: 1px solid #bbb;
}

.acts button {
    width: 52px;
    height: 18px;
    border: 1px solid #666;
    border-radius: 3px;
    background: linear-gradient(#fff, #e0e0e0 60%, #f4f4f4);
    line-height: 16px;
}

.acts .go {
    display: flex;
    justify-content: space-between;
    padding: 0 1px;
    border-color: #2a6a2a;
    background: linear-gradient(#d4f4c8, #7ad464 50%, #a8f090);
}

.acts b {
    font-weight: 400;
}

/* 平面类型菜单 */
.planes {
    position: absolute;
    top: 47px;
    left: 459px;
    z-index: 4;
    display: flex;
    flex-direction: column;
    align-items: center;
    gap: 2px;
    width: 36px;
    padding: 2px 0;
    border: 1px solid #888;
    border-top-color: #f4f4f4;
    border-left-color: #f4f4f4;
    background: #d8d8d8;
}

.planes button {
    display: flex;
    align-items: center;
    justify-content: center;
    width: 30px;
    height: 30px;
    border: 2px solid transparent;
    border-radius: 4px;
}

.planes svg {
    width: 24px;
    height: 24px;
    font-family: "Liberation Sans", sans-serif;
}

.planes .hot {
    border-color: #a05a30;
    background: linear-gradient(#fbd0b0, #f08040 60%, #ffc8a0);
}

.planes .sel {
    border-color: #2a5a98;
    background: linear-gradient(#c8e4fa, #4a98dc 60%, #a0d4f8);
}
```
